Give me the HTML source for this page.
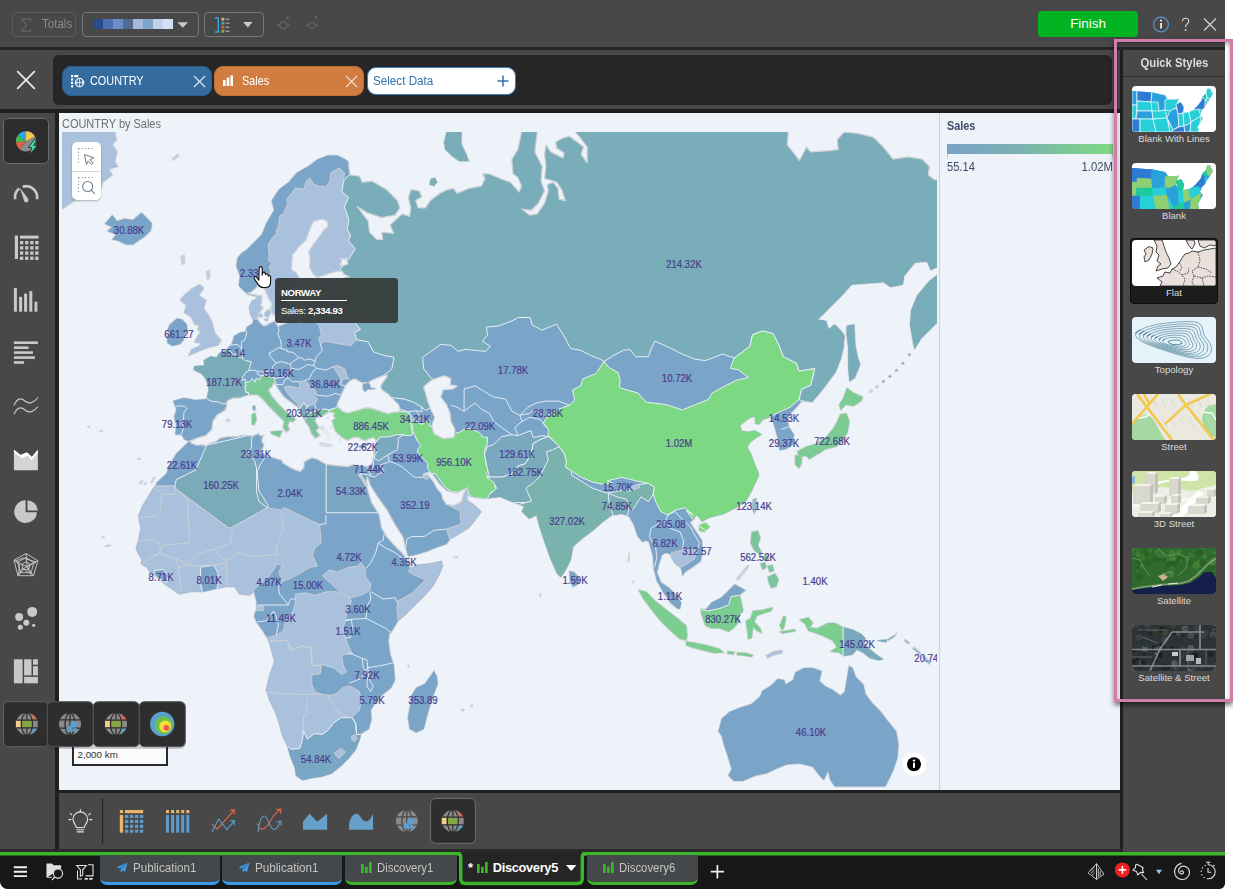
<!DOCTYPE html>
<html lang="en"><head><meta charset="utf-8"><title>Discovery5</title>
<style>
*{box-sizing:border-box;margin:0;padding:0}
html,body{width:1233px;height:889px;overflow:hidden;background:#fff;font-family:"Liberation Sans",sans-serif;}
#app{position:absolute;left:0;top:0;width:1225px;height:889px;background:#484848;overflow:hidden;border-radius:0 0 6px 8px;}
.abs{position:absolute}
/* top bar */
#topbar{position:absolute;left:0;top:0;width:1225px;height:47px;background:#484848;}
#topline{position:absolute;left:0;top:47px;width:1225px;height:3px;background:#262626;}
.tbtn{position:absolute;top:11.5px;height:25px;border:1px solid #777;border-radius:4px;}
#totals{left:12px;width:64px;border-color:#5c5c5c;color:#8a8a8a;font-size:12.7px;}
#totals span{position:absolute;left:28.5px;top:4.5px;}
#finish{position:absolute;left:1038px;top:11px;width:100px;height:26px;background:#02b322;border-radius:4px;color:#fff;font-size:13.4px;text-align:center;line-height:26px;}
/* data bar */
#databox{position:absolute;left:52.5px;top:55px;width:1059px;height:49.5px;background:#262626;border-radius:6px;}
.chip{position:absolute;top:66px;height:29.5px;border-radius:9px;color:#fff;font-size:13.2px;line-height:28.5px;}
#chip1{left:62px;width:150px;background:#356b9d;border:1px solid #2d5f8e;}
#chip2{left:214px;width:150px;background:#d17d41;border:1px solid #c06f35;}
#chip3{left:366.5px;width:149px;background:#fff;border:1.5px solid #3d7fbf;color:#3472ad;top:66.5px;height:28.5px;line-height:26px;}
#dline{position:absolute;left:0;top:108.5px;width:1225px;height:4.5px;background:#1f1f1f;}
/* sidebar */
#sideline{position:absolute;left:55px;top:110px;width:4px;height:742px;background:#1f1f1f;}
#selbtn{position:absolute;left:3px;top:118px;width:46px;height:46px;background:#2d2d2d;border:1px solid #6a6a6a;border-radius:5px;}
/* canvas */
#canvas{position:absolute;left:59px;top:113px;width:1061px;height:677px;background:#eef2f9;overflow:hidden;}
#title{position:absolute;left:3px;top:4px;font-size:12.2px;color:#6e6e6e;}
#legsep{position:absolute;left:880px;top:0;width:1px;height:677px;background:#c3d2e4;}
#legend{position:absolute;left:881px;top:0;width:180px;height:677px;}
#rline{position:absolute;left:1120px;top:50px;width:3px;height:802px;background:#1f1f1f;}
/* bottom toolbar */
#bline{position:absolute;left:55px;top:790px;width:1068px;height:3px;background:#1f1f1f;}
#btool{position:absolute;left:59px;top:793px;width:1061px;height:56px;background:#484848;}
#bline2{position:absolute;left:0;top:848.5px;width:1225px;height:3.5px;background:#2a2a2a;}
#tabbar{position:absolute;left:0;top:851.5px;width:1225px;height:38px;background:#171717;}
.tab{position:absolute;top:3.5px;height:29.5px;background:#45484b;border-radius:0 0 7px 7px;color:#c4c4c4;font-size:12.7px;line-height:26px;}
.tab.pub{border-bottom:3px solid #3b9bea;}
.tab.dis{border-bottom:3px solid #3bb52a;}
/* right panel */
#rpanel{position:absolute;left:1123px;top:50px;width:102px;height:802px;background:#484848;}
#qs{position:absolute;left:0;top:5px;width:102px;text-align:center;font-weight:bold;font-size:12.8px;color:#dcdcdc;}
#qsline{position:absolute;left:0;top:26px;width:102px;height:1px;background:#2e2e2e;}
.th{position:absolute;left:9px;width:84px;height:46px;border-radius:4px;overflow:hidden;background:#fff;}
.tl{position:absolute;left:0;width:102px;text-align:center;font-size:9.6px;color:#dcdcdc;}
#flatsel{position:absolute;left:7px;top:188px;width:88px;height:66px;background:#1c1c1c;border:1px solid #0c0c0c;border-radius:4px;}
#pink{position:absolute;left:1113.9px;top:39.4px;width:119.4px;height:662.8px;border:3.6px solid #d07fab;box-shadow:0 3px 5px rgba(0,0,0,.55), inset 0 2px 4px rgba(0,0,0,.35);}

.sx{display:inline-block;transform-origin:0 50%;white-space:nowrap}

</style></head>
<body>
<div id="app">
<div id="topbar">
  <div class="tbtn" id="totals"><svg class="abs" style="left:7px;top:5px" width="12" height="14" viewBox="0 0 12 14"><path d="M10.5 3V1H1.5L6.5 7L1.5 13H10.5V11" fill="none" stroke="#6a6a6a" stroke-width="1.1"/></svg><span class="sx" style="transform:scaleX(.91)">Totals</span></div>
  <div class="tbtn" style="left:82px;width:117px">
    <svg class="abs" style="left:10px;top:6.5px" width="100" height="11" viewBox="0 0 100 11"><rect x="0" width="10" height="10" fill="#2a4b87"/><rect x="10" width="10" height="10" fill="#4a72ae"/><rect x="20" width="10" height="10" fill="#6b8cc7"/><rect x="30" width="10" height="10" fill="#4f6b93"/><rect x="40" width="10" height="10" fill="#a3b8da"/><rect x="50" width="10" height="10" fill="#7ea5cd"/><rect x="60" width="10" height="10" fill="#c1d1e9"/><rect x="70" width="10" height="10" fill="#d5e1f3"/><path d="M84.5 3.2h10.5l-5.25 5.6z" fill="#c9c9c9"/></svg>
  </div>
  <div class="tbtn" style="left:204px;width:60px">
    <svg class="abs" style="left:5px;top:4px" width="50" height="16" viewBox="0 0 50 16"><path d="M5 1h3.3v14H5" fill="none" stroke="#2fa8e0" stroke-width="1.4"/><rect x="11.5" y="0.8" width="2.8" height="2.8" fill="#e9b45e"/><rect x="11.5" y="4.8" width="2.8" height="2.8" fill="#35b8a6"/><rect x="11.5" y="8.8" width="2.8" height="2.8" fill="#e05a3c"/><rect x="11.5" y="12.8" width="2.8" height="2.8" fill="#8db33f"/><path d="M15.6 2.2h3.8M15.6 6.2h3.8M15.6 10.2h3.8M15.6 14.2h3.8" stroke="#bdbdbd" stroke-width="1"/><path d="M33 5h9.6l-4.8 5.4z" fill="#c9c9c9"/></svg>
  </div>
  <svg class="abs" style="left:272px;top:12px" width="52" height="24" viewBox="0 0 52 24"><g fill="none" stroke="#6e6e6e" stroke-width="1"><circle cx="11.3" cy="13.3" r="3.6"/><path d="M4.5 13.3h3.2M15 13.3h3.4"/><circle cx="39.8" cy="13.3" r="3.2"/><path d="M33.5 13.3h3.1M43 13.3h3.3"/></g><path d="M14.3 6.8l1.5-2.4 1.5 2.4z" fill="#4d7fae"/><path d="M42.6 4.6h3l-1.5 2.3z" fill="#4d7fae"/></svg>
  <div id="finish">Finish</div>
  <svg class="abs" style="left:1150px;top:13px" width="72" height="24" viewBox="0 0 72 24"><circle cx="11" cy="11.5" r="7.4" fill="none" stroke="#5a9bd1" stroke-width="1.1"/><rect x="10.2" y="10" width="1.7" height="5.6" fill="#f2f2f2"/><circle cx="11.05" cy="7.6" r="1.05" fill="#f2f2f2"/><path d="M32.4 8.6c0-2.2 1.4-3.4 3.2-3.4s3.1 1.2 3.1 3c0 2.6-3.2 3-3.2 6" fill="none" stroke="#d4d4d4" stroke-width="1.1"/><circle cx="35.5" cy="17" r=".95" fill="#d4d4d4"/><path d="M54 5.5l12 12M66 5.5l-12 12" stroke="#d4d4d4" stroke-width="1.1"/></svg>
</div>
<div id="topline"></div>
<!-- data bar -->
<svg class="abs" style="left:15px;top:69px" width="22" height="22" viewBox="0 0 22 22"><path d="M2.2 2.2l17.6 17.6M19.8 2.2L2.2 19.8" stroke="#ececec" stroke-width="1.7"/></svg>
<div id="databox"></div>
<div class="chip" id="chip1"><svg class="abs" style="left:8px;top:8px" width="14" height="13" viewBox="0 0 14 13"><g fill="#fff"><rect x="0" y="0" width="2.2" height="2.2"/><rect x="3.2" y="0" width="4" height="2.2"/><rect x="0" y="3.4" width="2.2" height="2.2"/><rect x="0" y="6.8" width="2.2" height="2.2"/><rect x="0" y="10.2" width="2.2" height="2.2"/></g><circle cx="8.6" cy="7.6" r="4.3" fill="none" stroke="#fff" stroke-width="1"/><path d="M4.3 7.6h8.6M8.6 3.3v8.6M6.4 3.9c-1 2.4-1 5 0 7.4M10.8 3.9c1 2.4 1 5 0 7.4" fill="none" stroke="#fff" stroke-width=".8"/></svg><span class="abs sx" style="left:26.5px;top:0;transform:scaleX(.825)">COUNTRY</span><svg class="abs" style="left:130px;top:8px" width="13" height="13" viewBox="0 0 13 13"><path d="M1 1l11 11M12 1L1 12" stroke="#dfe8f0" stroke-width="1.1"/></svg></div>
<div class="chip" id="chip2"><svg class="abs" style="left:8px;top:8px" width="11" height="12" viewBox="0 0 11 12"><rect x="0" y="5" width="2.6" height="6" fill="#fff"/><rect x="3.7" y="2.6" width="2.6" height="8.4" fill="#fff"/><rect x="7.4" y="0.4" width="2.6" height="10.6" fill="#fff"/></svg><span class="abs sx" style="left:26.500px;top:0;transform:scaleX(.82)">Sales</span><svg class="abs" style="left:130px;top:8px" width="13" height="13" viewBox="0 0 13 13"><path d="M1 1l11 11M12 1L1 12" stroke="#f4dfd0" stroke-width="1.1"/></svg></div>
<div class="chip" id="chip3"><span class="abs sx" style="left:5.500px;top:0;transform:scaleX(.885)">Select Data</span><svg class="abs" style="left:129px;top:7px" width="12" height="12" viewBox="0 0 12 12"><path d="M6 0.5v11M0.5 6h11" stroke="#3472ad" stroke-width="1.5"/></svg></div>
<div id="dline"></div>
<!-- sidebar -->
<div id="selbtn"></div>
<svg class="abs" style="left:0;top:113px" width="55" height="640" viewBox="0 113 55 640">
<!-- pie + lightning -->
<g>
<path d="M26 141.4L26 131.2A10.2 10.2 0 0 1 35 136.600z" fill="#f3c74f"/>
<path d="M26 141.4L18 135A10.2 10.2 0 0 1 26 131.2z" fill="#2ea6ea"/>
<path d="M26 141.4L15.900 142.600A10.2 10.2 0 0 1 18 135z" fill="#45b559"/>
<path d="M26 141.4L19.500 149.300A10.2 10.2 0 0 1 15.900 142.600z" fill="#e5603e"/>
<path d="M26 141.4L35 136.600A10.2 10.2 0 0 1 26.500 151.600A10.2 10.2 0 0 1 19.500 149.300z" fill="#8b8b8b"/>
<path d="M34.200 139.600l-6.000 8.000h3.600l-2.300 7.200 8.000-9.300h-3.900l3.300-5.900z" fill="#3fe3a0" stroke="#2d2d2d" stroke-width=".9"/>
</g>
<!-- gauge -->
<g fill="none" stroke="#c9c9c9" stroke-width="2.700">
<path d="M15.17 199.23 A11.10 11.10 0 0 1 19.27 188.55"/>
<path d="M22.67 186.74 A11.10 11.10 0 0 1 37.03 199.23"/>
</g>
<path d="M19.700 187.600l8.700 11.500a2.400 2.400 0 0 1-4 2.500z" fill="#c9c9c9"/>
<!-- grid -->
<g fill="#c9c9c9">
<rect x="14.800" y="235.600" width="3.200" height="23.400"/><rect x="20" y="235.600" width="18.500" height="3"/>
<g id="gr"><rect x="20" y="241" width="3.300" height="3.300"/><rect x="25.100" y="241" width="3.300" height="3.300"/><rect x="30.200" y="241" width="3.300" height="3.300"/><rect x="35.200" y="241" width="3.300" height="3.300"/></g>
<use href="#gr" y="5.200"/><use href="#gr" y="10.400"/><use href="#gr" y="15.600"/>
</g>
<!-- column chart -->
<g fill="#c9c9c9"><rect x="13.900" y="287.900" width="3" height="23.800"/><rect x="19.100" y="296.800" width="3" height="14.900"/><rect x="24.100" y="293.600" width="3" height="18.100"/><rect x="29.300" y="291.100" width="3" height="20.600"/><rect x="34.500" y="301.700" width="2.900" height="10"/></g>
<!-- h bars -->
<g fill="#c9c9c9"><rect x="13.900" y="341.400" width="24" height="2.600"/><rect x="13.900" y="346.400" width="14.600" height="2.600"/><rect x="13.900" y="351.300" width="19.100" height="2.600"/><rect x="13.900" y="356.300" width="21" height="2.600"/><rect x="13.900" y="361.200" width="10.200" height="2.600"/></g>
<!-- lines -->
<g fill="none" stroke="#c9c9c9" stroke-width="1.100"><path d="M14 405.500c3-7.500 7-8 11-4.500s9 2 13-3.500"/><path d="M14 414.500c3-7.500 7-8 11-4.500s9 2 13-3.500"/></g>
<!-- area -->
<path d="M13.900 449.800l6.700 5.200 6-2.500 1.700 1 3.500 3.500 6.100-7.200v20.500h-24z" fill="#d4d4d4"/>
<path d="M13.900 449.800l6.700 5.200 6-2.500 1.700 1 3.500 3.500 6.100-7.200v2.800l-6 7.400-4.200-4.300-5.600 2.600-8.200-6z" fill="#fff"/>
<!-- pie -->
<path d="M25.600 512.300V500.300A11.400 11.400 0 1 0 37 512.300z" fill="#c9c9c9"/><path d="M27.500 510.400V500.200A10.800 10.800 0 0 1 37.700 510.400z" fill="#c9c9c9"/>
<!-- radar -->
<g fill="none" stroke="#c9c9c9" stroke-width=".9"><path d="M26 553.500l11.800 7.200-4.300 15h-15.600l-3.900-15.600z"/><path d="M26 557.600l8 5-3 10h-10.600l-2.700-10.500z"/><path d="M26 561.800l4.200 2.700-1.600 5.200h-5.400l-1.400-5.400z"/><path d="M26 553.500l1 13M37.800 560.700l-11.800 5.800M33.500 575.700l-7.500-9.200M17.900 575.700l8.100-9.200M14 560.100l12 6.400"/></g>
<path d="M23 558l13 4-8.500 4.500 4 8-9-6.500-4 7 1-10.500-4-3.500z" fill="none" stroke="#c9c9c9" stroke-width=".9"/>
<!-- bubbles -->
<g fill="#c9c9c9"><circle cx="32.200" cy="611.900" r="5"/><circle cx="19.100" cy="616.900" r="4"/><circle cx="26.300" cy="622.800" r="3"/><circle cx="20.300" cy="627.300" r="2.500"/><circle cx="33.700" cy="625.300" r="1.600"/></g>
<!-- treemap -->
<g fill="#c9c9c9"><rect x="13.900" y="659.300" width="8.700" height="24"/><rect x="24.100" y="659.300" width="7.400" height="16.100"/><rect x="33" y="659.300" width="4.900" height="5.400"/><rect x="33" y="666.200" width="4.900" height="9.200"/><rect x="24.100" y="676.900" width="13.800" height="6.400"/></g>
</svg>

<div id="sideline"></div>
<div id="canvas">
  <div id="title" class="sx" style="transform:scaleX(.9)">COUNTRY by Sales</div>
  <svg class="abs" style="left:3px;top:19px" width="875" height="657" viewBox="62 132 875 657" shape-rendering="geometricPrecision">
<defs><clipPath id="landclip">
<path d="M61.9,131.9 114.7,131.9 116.4,139.7 112.3,144.6 117.2,151.9 114.7,161.6 117.9,166.5 108.7,168.9 112.3,175.0 102.6,182.3 100.1,190.8 91.6,193.3 74.6,200.6 61.9,209.1Z"/>
<path d="M105.0,223.7 112.3,215.2 117.2,221.2 124.5,218.8 133.0,220.0 141.5,212.7 147.6,218.8 152.0,223.7 150.5,231.0 143.9,237.1 133.0,244.4 125.7,244.4 118.4,240.7 112.3,239.5 116.0,234.6 107.4,231.0 112.3,227.3Z"/>
<path d="M169.5,325.0 174.0,321.0 177.0,318.5 182.0,319.5 186.5,324.0 187.5,330.0 184.0,335.0 183.5,340.0 180.0,344.0 172.5,346.0 167.5,343.0 167.0,337.0 170.0,333.0 167.5,330.0Z"/>
<path d="M199.9,284.5 203.6,288.2 198.7,295.4 206.0,300.3 203.6,308.8 208.4,314.9 212.0,322.2 214.9,333.2 221.0,340.3 217.9,345.3 208.8,347.4 201.7,350.0 193.6,353.5 188.5,355.5 191.6,349.4 198.7,346.4 201.7,343.3 194.6,342.3 197.6,336.2 200.7,332.2 197.6,329.1 199.7,325.1 195.0,324.6 191.4,317.3 184.1,312.5 186.5,305.2 180.4,300.3 184.1,295.4 192.6,288.2Z"/>
<path d="M180.9,256.5 184.1,255.3 184.6,262.6 182.1,264.3Z"/>
<path d="M206.7,271.6 209.6,270.6 209.4,278.4 207.0,278.9Z"/>
<path d="M172.4,158.7 178.0,154.3 178.7,155.8 173.4,160.2Z"/>
<path d="M247.3,294.2 241.3,288.2 238.8,285.7 240.0,276.0 236.4,266.3 237.6,257.7 241.3,253.6 247.3,249.2 254.6,241.9 261.9,234.6 266.8,222.5 274.1,210.3 271.7,200.6 279.0,189.6 288.7,182.3 297.2,172.6 308.2,166.5 317.9,159.2 327.6,155.5 337.4,155.5 344.7,159.2 352.0,164.1 360.0,166.5 350.0,172.0 350.0,120.0 950.0,120.0 941.7,266.3 936.1,267.5 930.8,269.9 927.1,261.4 914.9,262.6 904.0,276.0 902.8,284.5 890.6,286.9 883.3,282.1 868.7,283.3 851.7,284.5 841.9,295.5 827.3,310.0 817.6,319.8 826.1,321.0 828.6,329.5 834.6,324.6 841.9,331.9 844.5,336.0 843.2,348.9 840.6,359.3 835.4,372.3 827.6,382.7 819.8,393.1 812.1,402.1 801.7,400.8 796.5,407.3 791.3,412.5 787.4,419.0 788.7,426.8 793.9,434.6 792.6,445.0 786.1,448.9 779.6,450.2 778.3,439.8 775.7,430.7 773.1,421.6 770.0,416.9 762.7,419.5 758.9,424.2 755.5,423.7 755.0,416.4 749.8,417.7 744.6,421.6 739.9,425.5 741.5,430.7 747.2,432.0 755.0,430.7 761.4,434.6 755.0,438.5 749.8,442.4 747.2,447.6 751.1,454.0 753.7,461.8 756.3,468.3 758.9,474.8 755.5,482.6 751.1,491.7 745.9,500.8 736.8,507.2 723.8,513.7 709.5,517.6 701.8,521.5 697.9,515.6 691.4,517.6 686.2,510.4 693.4,515.0 694.6,518.7 689.8,522.3 694.6,529.6 701.9,540.6 702.4,552.7 700.7,561.2 692.2,567.3 684.9,572.2 682.5,575.8 681.3,568.5 678.8,566.1 675.2,563.7 671.5,557.6 670.3,553.9 665.5,552.7 661.8,555.2 659.4,562.5 656.9,572.2 660.6,581.9 667.9,586.8 675.2,594.1 681.3,602.6 680.0,608.7 677.6,608.7 670.3,602.6 663.0,591.7 656.9,580.7 653.8,568.5 652.8,555.2 648.9,541.8 646.0,540.6 642.3,541.8 637.5,535.7 633.8,524.7 629.0,516.2 621.7,513.8 614.4,515.0 611.9,515.0 602.2,522.3 592.5,530.8 582.7,538.1 573.0,546.6 570.6,560.0 565.7,569.8 560.8,577.1 557.2,573.4 551.1,560.0 545.0,543.0 540.1,528.4 536.5,515.0 529.2,518.7 521.9,511.4 524.3,506.5 514.6,502.8 500.0,496.8 498.4,496.9 488.5,498.2 478.6,498.2 468.7,495.7 467.4,488.3 466.2,489.5 467.4,500.6 474.9,505.6 481.1,511.8 474.9,520.4 468.7,527.8 458.8,534.0 450.1,539.0 446.4,543.9 436.5,547.6 426.6,551.4 414.2,555.1 408.1,556.3 410.5,568.7 416.7,565.0 429.1,563.7 441.5,561.3 442.7,566.2 439.0,574.9 432.8,586.0 425.4,594.7 414.2,605.8 404.3,615.7 398.2,620.6 390.7,633.0 392.0,630.0 389.2,633.7 388.3,641.2 390.2,654.2 393.9,665.4 394.8,680.4 391.1,687.8 381.8,695.3 374.3,704.6 370.6,710.2 371.5,719.5 368.7,728.9 361.2,733.5 359.4,740.1 355.7,749.4 348.2,758.7 340.7,766.2 331.4,773.6 322.1,776.4 310.9,778.3 302.5,780.2 296.0,775.5 295.0,768.0 290.4,756.8 287.6,746.6 282.0,734.5 279.2,723.3 275.4,712.1 269.8,700.9 266.1,689.7 269.8,674.8 274.5,661.7 271.7,650.5 268.0,639.3 262.4,630.0 262.6,630.6 256.5,622.1 254.1,616.0 256.5,608.7 256.5,601.4 254.1,591.7 249.2,595.3 239.5,594.1 234.6,586.8 226.1,586.8 213.9,589.2 203.0,591.7 190.8,591.7 178.7,594.1 172.6,589.2 165.3,584.4 156.8,577.1 150.7,573.4 147.0,567.3 140.9,563.7 142.2,560.0 138.5,553.9 136.1,547.9 138.5,540.6 140.9,528.4 138.5,516.2 142.2,506.5 148.2,496.8 154.3,487.0 155.5,485.8 155.5,485.9 157.1,482.2 166.2,474.1 171.3,461.9 176.4,453.8 182.4,447.7 187.5,442.7 189.5,441.2 184.5,439.6 181.4,434.6 175.3,434.6 176.4,425.4 174.3,417.3 176.4,409.2 173.3,401.1 183.5,398.1 195.6,400.1 206.8,399.1 208.8,388.9 205.8,378.8 201.7,373.7 193.6,369.7 194.6,366.2 204.7,365.6 203.7,360.6 210.8,356.5 216.9,357.5 218.9,353.5 226.0,350.4 232.1,343.3 234.1,336.2 240.2,332.6 245.3,331.8 246.9,327.1 252.4,323.6 253.4,320.0 253.4,319.9 250.1,313.4 249.3,306.9 251.8,301.2 257.4,298.0 260.4,297.5Z"/>
<path d="M941.7,272.3 936.1,276.0 929.5,280.9 917.4,295.5 911.3,310.0 910.1,324.6 913.7,346.1 912.0,336.0 914.6,348.9 921.1,338.5 928.9,330.8 941.8,317.8Z"/>
<path d="M846.8,325.9 854.1,324.6 855.3,346.1 852.3,332.1 854.9,343.7 857.5,356.7 860.1,364.5 854.9,377.5 849.7,381.4 848.4,369.7 848.4,348.9 846.6,333.4Z"/>
<path d="M847.1,387.9 853.6,393.1 862.7,396.9 861.4,400.8 853.6,406.0 845.8,404.7 840.6,409.9 839.3,404.7 843.2,398.2Z"/>
<path d="M840.1,414.6 846.3,413.3 849.4,421.6 847.4,432.5 842.2,441.1 836.5,446.5 825.6,449.1 817.8,454.3 807.4,455.6 799.1,456.9 797.3,451.4 806.3,446.8 816.2,443.7 826.1,437.2 833.3,428.6 837.5,421.1Z"/>
<path d="M805.6,455.3 814.7,451.4 817.2,454.0 809.5,459.2Z"/>
<path d="M795.2,455.3 801.7,456.6 801.7,463.1 799.1,468.3 795.2,464.4Z"/>
<path d="M752.9,499.5 756.3,498.2 757.0,507.2 754.4,513.7 751.8,507.2Z"/>
<path d="M699.2,525.4 705.6,522.8 709.5,526.7 704.3,531.9 699.2,530.6Z"/>
<path d="M569.3,571.0 574.2,572.2 579.1,578.3 577.9,584.4 573.0,586.8 570.1,580.7Z"/>
<path d="M751.8,532.0 757.9,530.8 760.3,538.1 757.9,545.4 761.6,552.7 759.1,553.9 754.3,550.3 750.6,543.0Z"/>
<path d="M767.6,577.1 774.9,573.4 778.6,579.5 776.2,586.8 771.3,588.0 768.9,583.1Z"/>
<path d="M760.3,563.7 765.2,562.5 766.4,567.3 762.8,569.8Z"/>
<path d="M767.6,566.1 772.5,564.9 773.7,571.0 769.6,572.2Z"/>
<path d="M763.3,556.4 767.6,555.2 768.9,560.0 765.2,560.5Z"/>
<path d="M736.5,579.0 747.7,565.4 748.7,566.6 738.0,580.0Z"/>
<path d="M638.7,590.0 646.0,591.7 655.7,601.4 667.9,611.1 677.6,618.4 686.1,625.7 687.3,635.5 686.1,640.3 680.0,639.1 670.3,630.6 660.6,620.9 650.9,608.7 643.6,599.0Z"/>
<path d="M686.1,641.5 694.6,642.7 706.8,645.2 719.0,648.8 723.8,652.5 714.1,653.0 701.9,650.0 692.2,647.6 686.1,645.2Z"/>
<path d="M700.7,608.7 705.6,609.9 711.7,602.6 721.4,597.7 727.5,591.7 734.8,584.4 743.3,589.2 745.7,590.4 739.7,595.3 742.1,605.0 743.3,611.1 738.4,616.0 739.7,620.9 733.6,628.2 728.7,631.8 719.0,628.2 711.7,628.2 705.6,625.7 701.9,616.0Z"/>
<path d="M745.7,620.9 750.6,618.4 753.0,611.1 762.8,609.9 772.5,607.5 771.3,611.1 762.8,613.6 756.7,616.0 754.3,622.1 760.3,628.2 761.6,633.0 756.7,630.6 753.0,626.9 751.8,637.9 748.2,639.1 747.0,628.2Z"/>
<path d="M727.5,651.3 734.8,652.0 733.6,654.4 727.5,653.7Z"/>
<path d="M737.2,652.5 745.7,653.0 753.0,654.9 751.8,656.9 743.3,655.4 737.2,654.9Z"/>
<path d="M766.4,655.4 774.9,651.3 782.2,650.5 781.8,653.0 773.7,654.9 767.6,657.8Z"/>
<path d="M779.8,625.7 783.5,616.0 785.9,617.2 784.7,625.7 782.2,630.6Z"/>
<path d="M779.8,631.8 794.4,629.4 795.6,631.1 782.2,633.5Z"/>
<path d="M799.7,619.7 808.5,617.6 812.9,623.0 809.6,627.4 817.2,628.5 828.2,623.0 834.8,623.0 843.6,627.4 852.4,629.6 861.1,634.0 865.5,638.4 863.3,642.8 869.9,649.4 876.5,654.8 883.1,659.2 878.7,660.3 869.9,658.1 863.3,652.7 856.7,649.4 852.4,654.8 843.6,655.9 839.2,652.7 830.4,651.6 837.0,647.2 832.6,640.6 823.8,636.2 815.1,632.9 808.5,630.7 805.2,624.1Z"/>
<path d="M877.6,640.6 887.5,639.5 895.1,635.1 896.7,632.9 894.0,636.9 885.3,642.1Z"/>
<path d="M905.0,639.5 909.4,642.8 908.3,643.9 904.6,640.8Z"/>
<path d="M913.8,647.2 920.4,652.7 919.3,654.0 912.9,648.7Z"/>
<path d="M923.7,655.9 930.2,662.5 929.1,664.1 922.6,657.5Z"/>
<path d="M721.8,718.5 729.5,711.9 740.5,707.5 751.4,704.2 760.2,696.5 762.4,691.0 771.2,685.6 777.8,679.0 784.3,680.1 785.4,684.5 793.1,680.1 795.3,672.4 804.1,668.0 812.9,668.0 821.6,671.3 819.4,681.2 826.0,686.7 832.6,690.0 840.3,695.4 844.7,692.1 846.9,679.0 849.1,665.8 852.4,668.0 855.6,676.8 863.3,684.5 865.5,694.3 872.1,703.1 880.9,711.9 887.5,720.7 896.2,731.6 898.4,744.8 897.3,758.0 892.9,771.1 887.5,782.1 885.3,786.5 834.8,786.5 830.4,779.9 828.2,771.1 823.8,779.9 819.4,775.5 812.9,766.7 799.7,763.4 786.5,764.5 775.6,768.9 766.8,773.3 755.8,775.5 742.7,781.0 733.9,781.0 728.4,775.5 731.7,768.9 728.4,758.0 724.0,744.8 721.8,736.0 718.5,731.6Z"/>
<path d="M434.0,671.0 436.8,676.6 437.7,684.1 434.0,693.4 430.3,704.6 426.5,717.7 423.7,728.9 416.3,732.6 409.7,728.9 407.9,717.7 409.7,708.3 411.6,695.3 416.3,687.8 424.7,684.1 430.3,676.6Z"/>
<path d="M908.1,354.6 909.9,353.6 910.7,354.9 908.9,355.9Z"/>
<path d="M901.6,363.2 903.4,362.2 904.2,363.5 902.4,364.5Z"/>
<path d="M895.1,370.2 896.9,369.2 897.7,370.5 895.9,371.5Z"/>
<path d="M888.6,376.2 890.4,375.1 891.2,376.4 889.4,377.5Z"/>
<path d="M882.1,381.4 884.0,380.3 884.7,381.6 882.9,382.7Z"/>
<path d="M875.6,386.6 877.5,385.5 878.2,386.8 876.4,387.9Z"/>
<path d="M869.7,391.0 871.5,389.9 872.3,391.2 870.5,392.3Z"/>
<path d="M139.3,482.6 142.4,480.6 141.6,483.1Z"/>
<path d="M144.2,484.1 146.0,482.6 146.0,484.1Z"/>
<path d="M150.9,482.6 152.7,479.5 152.7,482.1Z"/>
<path d="M153.2,478.5 154.5,477.0 154.5,478.5Z"/>
<path d="M137.5,459.0 140.2,458.2 139.8,459.3Z"/>
<path d="M105.4,546.2 109.9,544.8 109.9,546.2Z"/>
<path d="M101.9,536.9 104.1,536.0 103.6,537.4Z"/>
<path d="M99.6,431.4 102.3,430.2 101.9,431.4Z"/>
<path d="M87.6,426.8 89.8,426.2 89.4,427.4Z"/>
<path d="M461.3,710.2 463.6,709.2 463.1,711.1Z"/>
<path d="M470.7,705.9 472.5,704.9 472.0,706.8Z"/>
<path d="M407.8,666.3 408.7,665.4 408.5,667.0Z"/>
<path d="M453.8,557.3 457.8,556.8 456.4,557.7Z"/>
<path d="M539.8,595.7 540.7,593.9 540.3,596.6Z"/>
<path d="M628.1,561.4 629.5,553.6 629.0,560.9Z"/>
<path d="M632.6,582.2 633.5,580.9 633.3,582.7Z"/>
</clipPath></defs>
<g fill="none" stroke="#cfd2d6" stroke-width="1.6" stroke-linejoin="round">
<path d="M61.9,131.9 114.7,131.9 116.4,139.7 112.3,144.6 117.2,151.9 114.7,161.6 117.9,166.5 108.7,168.9 112.3,175.0 102.6,182.3 100.1,190.8 91.6,193.3 74.6,200.6 61.9,209.1Z"/>
<path d="M105.0,223.7 112.3,215.2 117.2,221.2 124.5,218.8 133.0,220.0 141.5,212.7 147.6,218.8 152.0,223.7 150.5,231.0 143.9,237.1 133.0,244.4 125.7,244.4 118.4,240.7 112.3,239.5 116.0,234.6 107.4,231.0 112.3,227.3Z"/>
<path d="M169.5,325.0 174.0,321.0 177.0,318.5 182.0,319.5 186.5,324.0 187.5,330.0 184.0,335.0 183.5,340.0 180.0,344.0 172.5,346.0 167.5,343.0 167.0,337.0 170.0,333.0 167.5,330.0Z"/>
<path d="M199.9,284.5 203.6,288.2 198.7,295.4 206.0,300.3 203.6,308.8 208.4,314.9 212.0,322.2 214.9,333.2 221.0,340.3 217.9,345.3 208.8,347.4 201.7,350.0 193.6,353.5 188.5,355.5 191.6,349.4 198.7,346.4 201.7,343.3 194.6,342.3 197.6,336.2 200.7,332.2 197.6,329.1 199.7,325.1 195.0,324.6 191.4,317.3 184.1,312.5 186.5,305.2 180.4,300.3 184.1,295.4 192.6,288.2Z"/>
<path d="M180.9,256.5 184.1,255.3 184.6,262.6 182.1,264.3Z"/>
<path d="M206.7,271.6 209.6,270.6 209.4,278.4 207.0,278.9Z"/>
<path d="M172.4,158.7 178.0,154.3 178.7,155.8 173.4,160.2Z"/>
<path d="M247.3,294.2 241.3,288.2 238.8,285.7 240.0,276.0 236.4,266.3 237.6,257.7 241.3,253.6 247.3,249.2 254.6,241.9 261.9,234.6 266.8,222.5 274.1,210.3 271.7,200.6 279.0,189.6 288.7,182.3 297.2,172.6 308.2,166.5 317.9,159.2 327.6,155.5 337.4,155.5 344.7,159.2 352.0,164.1 360.0,166.5 350.0,172.0 350.0,120.0 950.0,120.0 941.7,266.3 936.1,267.5 930.8,269.9 927.1,261.4 914.9,262.6 904.0,276.0 902.8,284.5 890.6,286.9 883.3,282.1 868.7,283.3 851.7,284.5 841.9,295.5 827.3,310.0 817.6,319.8 826.1,321.0 828.6,329.5 834.6,324.6 841.9,331.9 844.5,336.0 843.2,348.9 840.6,359.3 835.4,372.3 827.6,382.7 819.8,393.1 812.1,402.1 801.7,400.8 796.5,407.3 791.3,412.5 787.4,419.0 788.7,426.8 793.9,434.6 792.6,445.0 786.1,448.9 779.6,450.2 778.3,439.8 775.7,430.7 773.1,421.6 770.0,416.9 762.7,419.5 758.9,424.2 755.5,423.7 755.0,416.4 749.8,417.7 744.6,421.6 739.9,425.5 741.5,430.7 747.2,432.0 755.0,430.7 761.4,434.6 755.0,438.5 749.8,442.4 747.2,447.6 751.1,454.0 753.7,461.8 756.3,468.3 758.9,474.8 755.5,482.6 751.1,491.7 745.9,500.8 736.8,507.2 723.8,513.7 709.5,517.6 701.8,521.5 697.9,515.6 691.4,517.6 686.2,510.4 693.4,515.0 694.6,518.7 689.8,522.3 694.6,529.6 701.9,540.6 702.4,552.7 700.7,561.2 692.2,567.3 684.9,572.2 682.5,575.8 681.3,568.5 678.8,566.1 675.2,563.7 671.5,557.6 670.3,553.9 665.5,552.7 661.8,555.2 659.4,562.5 656.9,572.2 660.6,581.9 667.9,586.8 675.2,594.1 681.3,602.6 680.0,608.7 677.6,608.7 670.3,602.6 663.0,591.7 656.9,580.7 653.8,568.5 652.8,555.2 648.9,541.8 646.0,540.6 642.3,541.8 637.5,535.7 633.8,524.7 629.0,516.2 621.7,513.8 614.4,515.0 611.9,515.0 602.2,522.3 592.5,530.8 582.7,538.1 573.0,546.6 570.6,560.0 565.7,569.8 560.8,577.1 557.2,573.4 551.1,560.0 545.0,543.0 540.1,528.4 536.5,515.0 529.2,518.7 521.9,511.4 524.3,506.5 514.6,502.8 500.0,496.8 498.4,496.9 488.5,498.2 478.6,498.2 468.7,495.7 467.4,488.3 466.2,489.5 467.4,500.6 474.9,505.6 481.1,511.8 474.9,520.4 468.7,527.8 458.8,534.0 450.1,539.0 446.4,543.9 436.5,547.6 426.6,551.4 414.2,555.1 408.1,556.3 410.5,568.7 416.7,565.0 429.1,563.7 441.5,561.3 442.7,566.2 439.0,574.9 432.8,586.0 425.4,594.7 414.2,605.8 404.3,615.7 398.2,620.6 390.7,633.0 392.0,630.0 389.2,633.7 388.3,641.2 390.2,654.2 393.9,665.4 394.8,680.4 391.1,687.8 381.8,695.3 374.3,704.6 370.6,710.2 371.5,719.5 368.7,728.9 361.2,733.5 359.4,740.1 355.7,749.4 348.2,758.7 340.7,766.2 331.4,773.6 322.1,776.4 310.9,778.3 302.5,780.2 296.0,775.5 295.0,768.0 290.4,756.8 287.6,746.6 282.0,734.5 279.2,723.3 275.4,712.1 269.8,700.9 266.1,689.7 269.8,674.8 274.5,661.7 271.7,650.5 268.0,639.3 262.4,630.0 262.6,630.6 256.5,622.1 254.1,616.0 256.5,608.7 256.5,601.4 254.1,591.7 249.2,595.3 239.5,594.1 234.6,586.8 226.1,586.8 213.9,589.2 203.0,591.7 190.8,591.7 178.7,594.1 172.6,589.2 165.3,584.4 156.8,577.1 150.7,573.4 147.0,567.3 140.9,563.7 142.2,560.0 138.5,553.9 136.1,547.9 138.5,540.6 140.9,528.4 138.5,516.2 142.2,506.5 148.2,496.8 154.3,487.0 155.5,485.8 155.5,485.9 157.1,482.2 166.2,474.1 171.3,461.9 176.4,453.8 182.4,447.7 187.5,442.7 189.5,441.2 184.5,439.6 181.4,434.6 175.3,434.6 176.4,425.4 174.3,417.3 176.4,409.2 173.3,401.1 183.5,398.1 195.6,400.1 206.8,399.1 208.8,388.9 205.8,378.8 201.7,373.7 193.6,369.7 194.6,366.2 204.7,365.6 203.7,360.6 210.8,356.5 216.9,357.5 218.9,353.5 226.0,350.4 232.1,343.3 234.1,336.2 240.2,332.6 245.3,331.8 246.9,327.1 252.4,323.6 253.4,320.0 253.4,319.9 250.1,313.4 249.3,306.9 251.8,301.2 257.4,298.0 260.4,297.5Z"/>
<path d="M941.7,272.3 936.1,276.0 929.5,280.9 917.4,295.5 911.3,310.0 910.1,324.6 913.7,346.1 912.0,336.0 914.6,348.9 921.1,338.5 928.9,330.8 941.8,317.8Z"/>
<path d="M846.8,325.9 854.1,324.6 855.3,346.1 852.3,332.1 854.9,343.7 857.5,356.7 860.1,364.5 854.9,377.5 849.7,381.4 848.4,369.7 848.4,348.9 846.6,333.4Z"/>
<path d="M847.1,387.9 853.6,393.1 862.7,396.9 861.4,400.8 853.6,406.0 845.8,404.7 840.6,409.9 839.3,404.7 843.2,398.2Z"/>
<path d="M840.1,414.6 846.3,413.3 849.4,421.6 847.4,432.5 842.2,441.1 836.5,446.5 825.6,449.1 817.8,454.3 807.4,455.6 799.1,456.9 797.3,451.4 806.3,446.8 816.2,443.7 826.1,437.2 833.3,428.6 837.5,421.1Z"/>
<path d="M805.6,455.3 814.7,451.4 817.2,454.0 809.5,459.2Z"/>
<path d="M795.2,455.3 801.7,456.6 801.7,463.1 799.1,468.3 795.2,464.4Z"/>
<path d="M752.9,499.5 756.3,498.2 757.0,507.2 754.4,513.7 751.8,507.2Z"/>
<path d="M699.2,525.4 705.6,522.8 709.5,526.7 704.3,531.9 699.2,530.6Z"/>
<path d="M569.3,571.0 574.2,572.2 579.1,578.3 577.9,584.4 573.0,586.8 570.1,580.7Z"/>
<path d="M751.8,532.0 757.9,530.8 760.3,538.1 757.9,545.4 761.6,552.7 759.1,553.9 754.3,550.3 750.6,543.0Z"/>
<path d="M767.6,577.1 774.9,573.4 778.6,579.5 776.2,586.8 771.3,588.0 768.9,583.1Z"/>
<path d="M760.3,563.7 765.2,562.5 766.4,567.3 762.8,569.8Z"/>
<path d="M767.6,566.1 772.5,564.9 773.7,571.0 769.6,572.2Z"/>
<path d="M763.3,556.4 767.6,555.2 768.9,560.0 765.2,560.5Z"/>
<path d="M736.5,579.0 747.7,565.4 748.7,566.6 738.0,580.0Z"/>
<path d="M638.7,590.0 646.0,591.7 655.7,601.4 667.9,611.1 677.6,618.4 686.1,625.7 687.3,635.5 686.1,640.3 680.0,639.1 670.3,630.6 660.6,620.9 650.9,608.7 643.6,599.0Z"/>
<path d="M686.1,641.5 694.6,642.7 706.8,645.2 719.0,648.8 723.8,652.5 714.1,653.0 701.9,650.0 692.2,647.6 686.1,645.2Z"/>
<path d="M700.7,608.7 705.6,609.9 711.7,602.6 721.4,597.7 727.5,591.7 734.8,584.4 743.3,589.2 745.7,590.4 739.7,595.3 742.1,605.0 743.3,611.1 738.4,616.0 739.7,620.9 733.6,628.2 728.7,631.8 719.0,628.2 711.7,628.2 705.6,625.7 701.9,616.0Z"/>
<path d="M745.7,620.9 750.6,618.4 753.0,611.1 762.8,609.9 772.5,607.5 771.3,611.1 762.8,613.6 756.7,616.0 754.3,622.1 760.3,628.2 761.6,633.0 756.7,630.6 753.0,626.9 751.8,637.9 748.2,639.1 747.0,628.2Z"/>
<path d="M727.5,651.3 734.8,652.0 733.6,654.4 727.5,653.7Z"/>
<path d="M737.2,652.5 745.7,653.0 753.0,654.9 751.8,656.9 743.3,655.4 737.2,654.9Z"/>
<path d="M766.4,655.4 774.9,651.3 782.2,650.5 781.8,653.0 773.7,654.9 767.6,657.8Z"/>
<path d="M779.8,625.7 783.5,616.0 785.9,617.2 784.7,625.7 782.2,630.6Z"/>
<path d="M779.8,631.8 794.4,629.4 795.6,631.1 782.2,633.5Z"/>
<path d="M799.7,619.7 808.5,617.6 812.9,623.0 809.6,627.4 817.2,628.5 828.2,623.0 834.8,623.0 843.6,627.4 852.4,629.6 861.1,634.0 865.5,638.4 863.3,642.8 869.9,649.4 876.5,654.8 883.1,659.2 878.7,660.3 869.9,658.1 863.3,652.7 856.7,649.4 852.4,654.8 843.6,655.9 839.2,652.7 830.4,651.6 837.0,647.2 832.6,640.6 823.8,636.2 815.1,632.9 808.5,630.7 805.2,624.1Z"/>
<path d="M877.6,640.6 887.5,639.5 895.1,635.1 896.7,632.9 894.0,636.9 885.3,642.1Z"/>
<path d="M905.0,639.5 909.4,642.8 908.3,643.9 904.6,640.8Z"/>
<path d="M913.8,647.2 920.4,652.7 919.3,654.0 912.9,648.7Z"/>
<path d="M923.7,655.9 930.2,662.5 929.1,664.1 922.6,657.5Z"/>
<path d="M721.8,718.5 729.5,711.9 740.5,707.5 751.4,704.2 760.2,696.5 762.4,691.0 771.2,685.6 777.8,679.0 784.3,680.1 785.4,684.5 793.1,680.1 795.3,672.4 804.1,668.0 812.9,668.0 821.6,671.3 819.4,681.2 826.0,686.7 832.6,690.0 840.3,695.4 844.7,692.1 846.9,679.0 849.1,665.8 852.4,668.0 855.6,676.8 863.3,684.5 865.5,694.3 872.1,703.1 880.9,711.9 887.5,720.7 896.2,731.6 898.4,744.8 897.3,758.0 892.9,771.1 887.5,782.1 885.3,786.5 834.8,786.5 830.4,779.9 828.2,771.1 823.8,779.9 819.4,775.5 812.9,766.7 799.7,763.4 786.5,764.5 775.6,768.9 766.8,773.3 755.8,775.5 742.7,781.0 733.9,781.0 728.4,775.5 731.7,768.9 728.4,758.0 724.0,744.8 721.8,736.0 718.5,731.6Z"/>
<path d="M434.0,671.0 436.8,676.6 437.7,684.1 434.0,693.4 430.3,704.6 426.5,717.7 423.7,728.9 416.3,732.6 409.7,728.9 407.9,717.7 409.7,708.3 411.6,695.3 416.3,687.8 424.7,684.1 430.3,676.6Z"/>
<path d="M908.1,354.6 909.9,353.6 910.7,354.9 908.9,355.9Z"/>
<path d="M901.6,363.2 903.4,362.2 904.2,363.5 902.4,364.5Z"/>
<path d="M895.1,370.2 896.9,369.2 897.7,370.5 895.9,371.5Z"/>
<path d="M888.6,376.2 890.4,375.1 891.2,376.4 889.4,377.5Z"/>
<path d="M882.1,381.4 884.0,380.3 884.7,381.6 882.9,382.7Z"/>
<path d="M875.6,386.6 877.5,385.5 878.2,386.8 876.4,387.9Z"/>
<path d="M869.7,391.0 871.5,389.9 872.3,391.2 870.5,392.3Z"/>
<path d="M139.3,482.6 142.4,480.6 141.6,483.1Z"/>
<path d="M144.2,484.1 146.0,482.6 146.0,484.1Z"/>
<path d="M150.9,482.6 152.7,479.5 152.7,482.1Z"/>
<path d="M153.2,478.5 154.5,477.0 154.5,478.5Z"/>
<path d="M137.5,459.0 140.2,458.2 139.8,459.3Z"/>
<path d="M105.4,546.2 109.9,544.8 109.9,546.2Z"/>
<path d="M101.9,536.9 104.1,536.0 103.6,537.4Z"/>
<path d="M99.6,431.4 102.3,430.2 101.9,431.4Z"/>
<path d="M87.6,426.8 89.8,426.2 89.4,427.4Z"/>
<path d="M461.3,710.2 463.6,709.2 463.1,711.1Z"/>
<path d="M470.7,705.9 472.5,704.9 472.0,706.8Z"/>
<path d="M407.8,666.3 408.7,665.4 408.5,667.0Z"/>
<path d="M453.8,557.3 457.8,556.8 456.4,557.7Z"/>
<path d="M539.8,595.7 540.7,593.9 540.3,596.6Z"/>
<path d="M628.1,561.4 629.5,553.6 629.0,560.9Z"/>
<path d="M632.6,582.2 633.5,580.9 633.3,582.7Z"/>
</g><g>
<path d="M61.9,131.9 114.7,131.9 116.4,139.7 112.3,144.6 117.2,151.9 114.7,161.6 117.9,166.5 108.7,168.9 112.3,175.0 102.6,182.3 100.1,190.8 91.6,193.3 74.6,200.6 61.9,209.1Z" fill="#a9c1dc"/>
<path d="M105.0,223.7 112.3,215.2 117.2,221.2 124.5,218.8 133.0,220.0 141.5,212.7 147.6,218.8 152.0,223.7 150.5,231.0 143.9,237.1 133.0,244.4 125.7,244.4 118.4,240.7 112.3,239.5 116.0,234.6 107.4,231.0 112.3,227.3Z" fill="#7ba4c9"/>
<path d="M169.5,325.0 174.0,321.0 177.0,318.5 182.0,319.5 186.5,324.0 187.5,330.0 184.0,335.0 183.5,340.0 180.0,344.0 172.5,346.0 167.5,343.0 167.0,337.0 170.0,333.0 167.5,330.0Z" fill="#7ba4c9"/>
<path d="M199.9,284.5 203.6,288.2 198.7,295.4 206.0,300.3 203.6,308.8 208.4,314.9 212.0,322.2 214.9,333.2 221.0,340.3 217.9,345.3 208.8,347.4 201.7,350.0 193.6,353.5 188.5,355.5 191.6,349.4 198.7,346.4 201.7,343.3 194.6,342.3 197.6,336.2 200.7,332.2 197.6,329.1 199.7,325.1 195.0,324.6 191.4,317.3 184.1,312.5 186.5,305.2 180.4,300.3 184.1,295.4 192.6,288.2Z" fill="#a9c1dc"/>
<path d="M180.9,256.5 184.1,255.3 184.6,262.6 182.1,264.3Z" fill="#c6d0dc"/>
<path d="M206.7,271.6 209.6,270.6 209.4,278.4 207.0,278.9Z" fill="#c6d0dc"/>
<path d="M172.4,158.7 178.0,154.3 178.7,155.8 173.4,160.2Z" fill="#c6d0dc"/>
<path d="M247.3,294.2 241.3,288.2 238.8,285.7 240.0,276.0 236.4,266.3 237.6,257.7 241.3,253.6 247.3,249.2 254.6,241.9 261.9,234.6 266.8,222.5 274.1,210.3 271.7,200.6 279.0,189.6 288.7,182.3 297.2,172.6 308.2,166.5 317.9,159.2 327.6,155.5 337.4,155.5 344.7,159.2 352.0,164.1 360.0,166.5 350.0,172.0 350.0,120.0 950.0,120.0 941.7,266.3 936.1,267.5 930.8,269.9 927.1,261.4 914.9,262.6 904.0,276.0 902.8,284.5 890.6,286.9 883.3,282.1 868.7,283.3 851.7,284.5 841.9,295.5 827.3,310.0 817.6,319.8 826.1,321.0 828.6,329.5 834.6,324.6 841.9,331.9 844.5,336.0 843.2,348.9 840.6,359.3 835.4,372.3 827.6,382.7 819.8,393.1 812.1,402.1 801.7,400.8 796.5,407.3 791.3,412.5 787.4,419.0 788.7,426.8 793.9,434.6 792.6,445.0 786.1,448.9 779.6,450.2 778.3,439.8 775.7,430.7 773.1,421.6 770.0,416.9 762.7,419.5 758.9,424.2 755.5,423.7 755.0,416.4 749.8,417.7 744.6,421.6 739.9,425.5 741.5,430.7 747.2,432.0 755.0,430.7 761.4,434.6 755.0,438.5 749.8,442.4 747.2,447.6 751.1,454.0 753.7,461.8 756.3,468.3 758.9,474.8 755.5,482.6 751.1,491.7 745.9,500.8 736.8,507.2 723.8,513.7 709.5,517.6 701.8,521.5 697.9,515.6 691.4,517.6 686.2,510.4 693.4,515.0 694.6,518.7 689.8,522.3 694.6,529.6 701.9,540.6 702.4,552.7 700.7,561.2 692.2,567.3 684.9,572.2 682.5,575.8 681.3,568.5 678.8,566.1 675.2,563.7 671.5,557.6 670.3,553.9 665.5,552.7 661.8,555.2 659.4,562.5 656.9,572.2 660.6,581.9 667.9,586.8 675.2,594.1 681.3,602.6 680.0,608.7 677.6,608.7 670.3,602.6 663.0,591.7 656.9,580.7 653.8,568.5 652.8,555.2 648.9,541.8 646.0,540.6 642.3,541.8 637.5,535.7 633.8,524.7 629.0,516.2 621.7,513.8 614.4,515.0 611.9,515.0 602.2,522.3 592.5,530.8 582.7,538.1 573.0,546.6 570.6,560.0 565.7,569.8 560.8,577.1 557.2,573.4 551.1,560.0 545.0,543.0 540.1,528.4 536.5,515.0 529.2,518.7 521.9,511.4 524.3,506.5 514.6,502.8 500.0,496.8 498.4,496.9 488.5,498.2 478.6,498.2 468.7,495.7 467.4,488.3 466.2,489.5 467.4,500.6 474.9,505.6 481.1,511.8 474.9,520.4 468.7,527.8 458.8,534.0 450.1,539.0 446.4,543.9 436.5,547.6 426.6,551.4 414.2,555.1 408.1,556.3 410.5,568.7 416.7,565.0 429.1,563.7 441.5,561.3 442.7,566.2 439.0,574.9 432.8,586.0 425.4,594.7 414.2,605.8 404.3,615.7 398.2,620.6 390.7,633.0 392.0,630.0 389.2,633.7 388.3,641.2 390.2,654.2 393.9,665.4 394.8,680.4 391.1,687.8 381.8,695.3 374.3,704.6 370.6,710.2 371.5,719.5 368.7,728.9 361.2,733.5 359.4,740.1 355.7,749.4 348.2,758.7 340.7,766.2 331.4,773.6 322.1,776.4 310.9,778.3 302.5,780.2 296.0,775.5 295.0,768.0 290.4,756.8 287.6,746.6 282.0,734.5 279.2,723.3 275.4,712.1 269.8,700.9 266.1,689.7 269.8,674.8 274.5,661.7 271.7,650.5 268.0,639.3 262.4,630.0 262.6,630.6 256.5,622.1 254.1,616.0 256.5,608.7 256.5,601.4 254.1,591.7 249.2,595.3 239.5,594.1 234.6,586.8 226.1,586.8 213.9,589.2 203.0,591.7 190.8,591.7 178.7,594.1 172.6,589.2 165.3,584.4 156.8,577.1 150.7,573.4 147.0,567.3 140.9,563.7 142.2,560.0 138.5,553.9 136.1,547.9 138.5,540.6 140.9,528.4 138.5,516.2 142.2,506.5 148.2,496.8 154.3,487.0 155.5,485.8 155.5,485.9 157.1,482.2 166.2,474.1 171.3,461.9 176.4,453.8 182.4,447.7 187.5,442.7 189.5,441.2 184.5,439.6 181.4,434.6 175.3,434.6 176.4,425.4 174.3,417.3 176.4,409.2 173.3,401.1 183.5,398.1 195.6,400.1 206.8,399.1 208.8,388.9 205.8,378.8 201.7,373.7 193.6,369.7 194.6,366.2 204.7,365.6 203.7,360.6 210.8,356.5 216.9,357.5 218.9,353.5 226.0,350.4 232.1,343.3 234.1,336.2 240.2,332.6 245.3,331.8 246.9,327.1 252.4,323.6 253.4,320.0 253.4,319.9 250.1,313.4 249.3,306.9 251.8,301.2 257.4,298.0 260.4,297.5Z" fill="#7ba4c9"/>
<path d="M941.7,272.3 936.1,276.0 929.5,280.9 917.4,295.5 911.3,310.0 910.1,324.6 913.7,346.1 912.0,336.0 914.6,348.9 921.1,338.5 928.9,330.8 941.8,317.8Z" fill="#79adb9"/>
<path d="M846.8,325.9 854.1,324.6 855.3,346.1 852.3,332.1 854.9,343.7 857.5,356.7 860.1,364.5 854.9,377.5 849.7,381.4 848.4,369.7 848.4,348.9 846.6,333.4Z" fill="#79adb9"/>
<path d="M847.1,387.9 853.6,393.1 862.7,396.9 861.4,400.8 853.6,406.0 845.8,404.7 840.6,409.9 839.3,404.7 843.2,398.2Z" fill="#7ccb93"/>
<path d="M840.1,414.6 846.3,413.3 849.4,421.6 847.4,432.5 842.2,441.1 836.5,446.5 825.6,449.1 817.8,454.3 807.4,455.6 799.1,456.9 797.3,451.4 806.3,446.8 816.2,443.7 826.1,437.2 833.3,428.6 837.5,421.1Z" fill="#7ccb93"/>
<path d="M805.6,455.3 814.7,451.4 817.2,454.0 809.5,459.2Z" fill="#7ccb93"/>
<path d="M795.2,455.3 801.7,456.6 801.7,463.1 799.1,468.3 795.2,464.4Z" fill="#7ccb93"/>
<path d="M752.9,499.5 756.3,498.2 757.0,507.2 754.4,513.7 751.8,507.2Z" fill="#9db9d2"/>
<path d="M699.2,525.4 705.6,522.8 709.5,526.7 704.3,531.9 699.2,530.6Z" fill="#7dd884"/>
<path d="M569.3,571.0 574.2,572.2 579.1,578.3 577.9,584.4 573.0,586.8 570.1,580.7Z" fill="#7ba4c9"/>
<path d="M751.8,532.0 757.9,530.8 760.3,538.1 757.9,545.4 761.6,552.7 759.1,553.9 754.3,550.3 750.6,543.0Z" fill="#7bc49c"/>
<path d="M767.6,577.1 774.9,573.4 778.6,579.5 776.2,586.8 771.3,588.0 768.9,583.1Z" fill="#7bc49c"/>
<path d="M760.3,563.7 765.2,562.5 766.4,567.3 762.8,569.8Z" fill="#7bc49c"/>
<path d="M767.6,566.1 772.5,564.9 773.7,571.0 769.6,572.2Z" fill="#7bc49c"/>
<path d="M763.3,556.4 767.6,555.2 768.9,560.0 765.2,560.5Z" fill="#7bc49c"/>
<path d="M736.5,579.0 747.7,565.4 748.7,566.6 738.0,580.0Z" fill="#c6d0dc"/>
<path d="M638.7,590.0 646.0,591.7 655.7,601.4 667.9,611.1 677.6,618.4 686.1,625.7 687.3,635.5 686.1,640.3 680.0,639.1 670.3,630.6 660.6,620.9 650.9,608.7 643.6,599.0Z" fill="#7cce90"/>
<path d="M686.1,641.5 694.6,642.7 706.8,645.2 719.0,648.8 723.8,652.5 714.1,653.0 701.9,650.0 692.2,647.6 686.1,645.2Z" fill="#7cce90"/>
<path d="M700.7,608.7 705.6,609.9 711.7,602.6 721.4,597.7 727.5,591.7 734.8,584.4 743.3,589.2 745.7,590.4 739.7,595.3 742.1,605.0 743.3,611.1 738.4,616.0 739.7,620.9 733.6,628.2 728.7,631.8 719.0,628.2 711.7,628.2 705.6,625.7 701.9,616.0Z" fill="#7cce90"/>
<path d="M745.7,620.9 750.6,618.4 753.0,611.1 762.8,609.9 772.5,607.5 771.3,611.1 762.8,613.6 756.7,616.0 754.3,622.1 760.3,628.2 761.6,633.0 756.7,630.6 753.0,626.9 751.8,637.9 748.2,639.1 747.0,628.2Z" fill="#7cce90"/>
<path d="M727.5,651.3 734.8,652.0 733.6,654.4 727.5,653.7Z" fill="#7cce90"/>
<path d="M737.2,652.5 745.7,653.0 753.0,654.9 751.8,656.9 743.3,655.4 737.2,654.9Z" fill="#7cce90"/>
<path d="M766.4,655.4 774.9,651.3 782.2,650.5 781.8,653.0 773.7,654.9 767.6,657.8Z" fill="#a9c1dc"/>
<path d="M779.8,625.7 783.5,616.0 785.9,617.2 784.7,625.7 782.2,630.6Z" fill="#7cce90"/>
<path d="M779.8,631.8 794.4,629.4 795.6,631.1 782.2,633.5Z" fill="#7cce90"/>
<path d="M799.7,619.7 808.5,617.6 812.9,623.0 809.6,627.4 817.2,628.5 828.2,623.0 834.8,623.0 843.6,627.4 852.4,629.6 861.1,634.0 865.5,638.4 863.3,642.8 869.9,649.4 876.5,654.8 883.1,659.2 878.7,660.3 869.9,658.1 863.3,652.7 856.7,649.4 852.4,654.8 843.6,655.9 839.2,652.7 830.4,651.6 837.0,647.2 832.6,640.6 823.8,636.2 815.1,632.9 808.5,630.7 805.2,624.1Z" fill="#7cce90"/>
<path d="M877.6,640.6 887.5,639.5 895.1,635.1 896.7,632.9 894.0,636.9 885.3,642.1Z" fill="#7aa9bf"/>
<path d="M905.0,639.5 909.4,642.8 908.3,643.9 904.6,640.8Z" fill="#9db9d2"/>
<path d="M913.8,647.2 920.4,652.7 919.3,654.0 912.9,648.7Z" fill="#9db9d2"/>
<path d="M923.7,655.9 930.2,662.5 929.1,664.1 922.6,657.5Z" fill="#9db9d2"/>
<path d="M721.8,718.5 729.5,711.9 740.5,707.5 751.4,704.2 760.2,696.5 762.4,691.0 771.2,685.6 777.8,679.0 784.3,680.1 785.4,684.5 793.1,680.1 795.3,672.4 804.1,668.0 812.9,668.0 821.6,671.3 819.4,681.2 826.0,686.7 832.6,690.0 840.3,695.4 844.7,692.1 846.9,679.0 849.1,665.8 852.4,668.0 855.6,676.8 863.3,684.5 865.5,694.3 872.1,703.1 880.9,711.9 887.5,720.7 896.2,731.6 898.4,744.8 897.3,758.0 892.9,771.1 887.5,782.1 885.3,786.5 834.8,786.5 830.4,779.9 828.2,771.1 823.8,779.9 819.4,775.5 812.9,766.7 799.7,763.4 786.5,764.5 775.6,768.9 766.8,773.3 755.8,775.5 742.7,781.0 733.9,781.0 728.4,775.5 731.7,768.9 728.4,758.0 724.0,744.8 721.8,736.0 718.5,731.6Z" fill="#7ba4c9"/>
<path d="M434.0,671.0 436.8,676.6 437.7,684.1 434.0,693.4 430.3,704.6 426.5,717.7 423.7,728.9 416.3,732.6 409.7,728.9 407.9,717.7 409.7,708.3 411.6,695.3 416.3,687.8 424.7,684.1 430.3,676.6Z" fill="#7ba4c9"/>
<path d="M908.1,354.6 909.9,353.6 910.7,354.9 908.9,355.9Z" fill="#c6d0dc"/>
<path d="M901.6,363.2 903.4,362.2 904.2,363.5 902.4,364.5Z" fill="#c6d0dc"/>
<path d="M895.1,370.2 896.9,369.2 897.7,370.5 895.9,371.5Z" fill="#c6d0dc"/>
<path d="M888.6,376.2 890.4,375.1 891.2,376.4 889.4,377.5Z" fill="#c6d0dc"/>
<path d="M882.1,381.4 884.0,380.3 884.7,381.6 882.9,382.7Z" fill="#c6d0dc"/>
<path d="M875.6,386.6 877.5,385.5 878.2,386.8 876.4,387.9Z" fill="#c6d0dc"/>
<path d="M869.7,391.0 871.5,389.9 872.3,391.2 870.5,392.3Z" fill="#c6d0dc"/>
<path d="M139.3,482.6 142.4,480.6 141.6,483.1Z" fill="#ced6e0"/>
<path d="M144.2,484.1 146.0,482.6 146.0,484.1Z" fill="#ced6e0"/>
<path d="M150.9,482.6 152.7,479.5 152.7,482.1Z" fill="#ced6e0"/>
<path d="M153.2,478.5 154.5,477.0 154.5,478.5Z" fill="#ced6e0"/>
<path d="M137.5,459.0 140.2,458.2 139.8,459.3Z" fill="#ced6e0"/>
<path d="M105.4,546.2 109.9,544.8 109.9,546.2Z" fill="#ced6e0"/>
<path d="M101.9,536.9 104.1,536.0 103.6,537.4Z" fill="#ced6e0"/>
<path d="M99.6,431.4 102.3,430.2 101.9,431.4Z" fill="#ced6e0"/>
<path d="M87.6,426.8 89.8,426.2 89.4,427.4Z" fill="#ced6e0"/>
<path d="M461.3,710.2 463.6,709.2 463.1,711.1Z" fill="#ced6e0"/>
<path d="M470.7,705.9 472.5,704.9 472.0,706.8Z" fill="#ced6e0"/>
<path d="M407.8,666.3 408.7,665.4 408.5,667.0Z" fill="#ced6e0"/>
<path d="M453.8,557.3 457.8,556.8 456.4,557.7Z" fill="#ced6e0"/>
<path d="M539.8,595.7 540.7,593.9 540.3,596.6Z" fill="#ced6e0"/>
<path d="M628.1,561.4 629.5,553.6 629.0,560.9Z" fill="#ced6e0"/>
<path d="M632.6,582.2 633.5,580.9 633.3,582.7Z" fill="#ced6e0"/>
</g><g clip-path="url(#landclip)" stroke-width=".95" stroke-linejoin="round">
<path d="M264.2,285.0 266.9,279.8 267.8,277.1 270.4,275.3 270.9,271.7 269.1,267.1 272.2,263.4 268.7,260.6 269.1,254.9 268.2,245.1 271.3,239.1 277.1,232.9 275.8,231.8 278.5,226.6 279.8,215.8 283.8,213.5 287.8,203.3 286.5,199.9 291.9,192.8 295.4,187.9 303.9,189.1 306.4,181.0 309.7,178.0 314.2,184.2 318.2,186.1 325.8,186.7 329.8,181.8 330.7,172.9 339.1,167.9 344.5,172.9 343.6,181.1 366.3,216.9 366.3,276.2 321.7,278.0 303.9,282.4 301.7,297.8 281.6,316.3 271.8,316.3 271.3,313.2 271.1,309.6 267.3,306.0 264.7,297.8 263.3,288.5Z" fill="#a9c1dc" stroke="#ccd0d5"/>
<path d="M248.1,318.7 253.1,318.7 257.1,319.4 260.2,319.8 266.0,306.0 263.8,293.6 248.1,297.8Z" fill="#a9c1dc" stroke="#ccd0d5"/>
<path d="M306.1,301.9 307.9,314.8 308.8,315.5 312.8,317.1 316.4,318.7 315.9,322.5 319.5,325.6 319.5,326.3 321.3,335.3 318.2,338.3 320.2,343.3 326.2,341.2 336.0,343.3 344.9,344.8 351.2,345.5 356.5,339.7 370.8,340.4 370.8,276.2 339.6,278.0 317.3,280.6 308.4,289.3Z" fill="#a9c1dc" stroke="#ccd0d5"/>
<path d="M333.3,366.6 337.4,365.3 341.8,367.6 344.9,369.0 346.7,375.6 348.9,378.8 343.6,378.5 340.5,384.6 340.0,377.5 336.0,371.0Z" fill="#a9c1dc" stroke="#ccd0d5"/>
<path d="M284.9,386.5 290.1,386.2 299.4,388.4 299.7,384.6 299.0,381.7 305.0,380.4 310.6,386.5 315.9,390.9 314.6,395.3 317.3,399.0 314.6,404.5 310.6,404.8 306.6,407.2 304.3,403.0 301.2,407.2 299.0,406.9 297.0,403.0 293.4,400.2 291.9,398.4 288.3,394.1 284.9,389.1Z" fill="#a9c1dc" stroke="#ccd0d5"/>
<path d="M301.0,407.1 303.0,403.3 306.1,405.1 306.6,407.2 306.1,410.5 308.4,413.1 306.6,417.6 303.9,419.9 299.4,418.7 299.4,409.3Z" fill="#7aaab9" stroke="#edf2f8"/>
<path d="M226.1,347.1 228.5,349.1 233.4,354.7 236.3,353.6 236.6,356.1 240.6,357.8 243.0,358.3 244.6,360.2 251.3,361.8 248.6,371.0 245.9,372.3 241.9,378.2 241.9,380.4 245.0,378.8 245.9,382.1 245.0,382.7 246.4,385.9 244.4,387.2 245.9,389.7 245.5,391.9 249.0,393.1 248.1,395.6 241.5,403.3 230.3,406.3 228.7,403.6 222.7,403.9 217.8,401.8 212.5,401.4 208.5,399.9 206.7,398.1 201.3,394.1 187.9,364.9 205.8,354.7 221.4,346.2Z" fill="#79abb9" stroke="#edf2f8"/>
<path d="M248.1,395.6 249.0,393.1 245.5,391.9 245.9,389.7 244.4,387.2 246.4,385.9 245.0,382.7 245.9,382.1 249.9,381.7 252.4,378.5 254.8,382.4 256.2,378.2 259.7,379.8 261.3,375.6 268.7,374.9 270.0,376.9 275.8,378.2 274.5,380.1 275.4,382.7 276.2,384.0 274.0,385.9 273.6,389.1 283.8,401.4 295.0,410.5 299.4,418.1 298.5,429.7 283.8,433.6 272.7,421.1 259.3,409.3 257.1,397.2 248.1,396.5Z" fill="#7cc898" stroke="#edf2f8"/>
<path d="M303.9,419.9 306.6,417.6 308.4,413.1 316.8,410.2 324.0,409.0 331.1,410.2 332.2,408.1 333.3,410.2 332.0,412.6 330.9,413.7 330.7,421.1 324.0,440.9 310.6,440.9 301.7,426.8Z" fill="#7cc29f" stroke="#edf2f8"/>
<path d="M329.2,409.6 331.8,409.6 334.4,408.3 337.6,407.2 339.6,408.3 342.2,410.9 347.4,412.9 352.6,411.5 357.9,410.2 363.1,408.3 368.3,407.6 373.5,408.9 381.4,411.5 387.9,413.5 394.4,412.2 399.6,411.5 404.8,411.5 408.8,413.5 410.7,417.4 412.0,421.3 410.7,423.9 412.0,429.2 412.7,435.0 407.5,435.7 403.5,435.0 398.3,437.0 390.5,437.7 384.0,438.3 378.7,439.0 376.1,440.9 374.8,443.5 368.3,443.5 357.9,440.9 344.8,442.2 337.0,437.0 331.8,430.5 329.2,422.6 327.8,414.8Z" fill="#7dd38a" stroke="#edf2f8"/>
<path d="M373.9,441.4 376.2,441.7 378.4,439.5 379.7,437.0 387.7,437.0 396.7,434.7 403.6,434.7 398.5,438.1 397.6,449.6 387.7,455.0 378.8,460.8 374.4,458.5 374.8,455.0 377.9,450.7 377.5,449.1 375.0,448.2 373.5,445.3Z" fill="#7aa9bf" stroke="#edf2f8"/>
<path d="M414.5,420.3 411.2,421.6 412.7,427.4 412.3,430.2 414.5,434.2 417.2,440.9 420.8,445.3 418.1,448.5 417.6,452.3 420.8,456.1 427.9,463.5 427.4,467.7 428.8,470.5 431.2,473.1 435.5,473.9 439.0,479.0 444.4,486.6 451.1,491.6 460.0,492.1 467.1,489.6 471.1,497.1 489.4,499.1 489.4,497.1 490.6,492.1 497.0,489.9 494.8,487.1 494.8,481.8 489.4,478.0 486.1,473.6 490.3,467.7 486.3,465.1 484.5,453.4 484.8,450.1 487.7,443.1 487.4,437.2 483.6,437.2 479.2,432.5 470.3,428.5 464.5,429.1 459.1,432.5 455.1,433.3 453.3,432.5 442.2,430.8 435.5,429.7 432.8,427.4 428.8,425.1 430.6,421.6 427.9,419.9 422.1,424.5Z" fill="#7dd787" stroke="#edf2f8"/>
<path d="M487.5,446.7 493.5,444.7 501.7,436.6 511.8,434.6 517.9,435.6 526.0,432.5 531.1,430.5 533.1,437.6 542.2,435.6 548.3,436.6 540.2,439.6 533.1,443.7 532.1,449.8 529.0,457.9 525.0,464.0 517.9,466.0 511.8,474.1 501.7,477.1 489.5,477.1 486.4,464.0 484.4,453.8Z" fill="#7aa8bf" stroke="#edf2f8"/>
<path d="M489.5,477.1 501.7,477.1 511.8,474.1 517.9,466.0 525.0,464.0 529.0,457.9 532.1,449.8 533.1,443.7 540.2,439.6 548.3,436.6 554.4,441.7 562.5,449.8 558.4,461.9 552.3,478.2 542.2,492.3 534.1,502.5 485.4,502.5 489.5,494.4 496.6,488.3 493.5,482.2 486.4,477.1Z" fill="#7aabba" stroke="#edf2f8"/>
<path d="M518.9,504.5 531.4,501.0 526.9,490.6 526.0,488.3 534.1,482.2 540.2,476.1 544.2,468.0 548.3,459.9 546.3,451.8 552.3,449.8 559.4,446.7 564.5,453.8 566.5,461.9 565.5,467.0 571.6,471.1 571.6,475.1 582.8,482.2 592.9,488.3 607.1,493.1 614.4,491.9 626.5,489.5 638.7,484.6 648.4,483.4 654.5,487.0 653.3,494.3 648.4,501.6 641.1,496.8 636.3,504.1 632.6,510.1 627.7,506.5 626.5,513.8 621.7,512.6 611.9,518.7 597.3,533.3 577.9,550.3 568.1,572.2 560.8,581.9 553.5,577.1 541.4,543.0 534.1,522.3 525.5,522.3 518.2,512.6 520.7,506.5Z" fill="#7ab2ae" stroke="#edf2f8"/>
<path d="M608.3,493.1 616.8,496.8 626.5,499.2 629.0,506.5 627.7,515.0 621.7,516.2 614.4,517.4 609.5,506.5Z" fill="#7aabb8" stroke="#edf2f8"/>
<path d="M626.5,489.0 638.7,484.1 639.9,487.5 627.7,491.9Z" fill="#a9c1dc" stroke="#ccd0d5"/>
<path d="M604.0,361.6 595.9,373.7 582.8,378.8 580.7,385.9 572.6,390.0 574.6,400.1 569.6,405.2 558.4,409.2 548.3,415.3 543.2,423.4 548.3,429.5 548.3,435.6 554.4,441.7 559.4,446.7 564.5,453.8 566.5,461.9 565.5,467.0 571.6,471.1 580.7,477.1 592.9,482.2 603.0,484.2 613.2,483.2 607.1,480.9 621.7,477.3 636.3,480.9 648.4,483.4 654.5,487.0 653.3,494.3 655.7,501.6 660.6,511.4 667.9,515.0 675.2,510.1 684.9,507.7 693.4,515.0 686.2,510.4 697.9,525.4 710.8,533.7 713.4,523.3 742.0,510.4 749.0,499.5 751.3,494.8 757.6,484.4 762.2,476.1 758.9,455.3 765.3,434.6 767.9,422.1 770.0,416.9 778.3,412.5 790.0,407.3 799.1,399.5 801.7,389.2 810.8,385.3 813.4,374.9 814.7,368.4 799.1,371.0 796.5,363.2 783.5,356.7 778.3,343.7 773.1,333.4 762.7,330.8 752.4,334.7 749.8,346.3 734.2,358.0 730.3,368.4 738.1,369.7 748.5,377.5 736.8,380.1 723.8,386.6 712.1,393.1 708.2,399.5 695.3,404.7 682.3,409.9 666.7,404.7 646.0,402.1 638.2,393.1 620.0,387.9 619.3,386.9 620.3,380.8 618.2,372.7 609.1,367.6Z" fill="#7dd884" stroke="#edf2f8"/>
<path d="M671.5,552.7 682.5,550.3 689.8,549.1 697.1,550.3 694.6,558.8 687.3,563.7 681.3,567.3 675.2,564.9 670.3,558.8Z" fill="#a9c1dc" stroke="#ccd0d5"/>
<path d="M446.4,529.1 461.3,524.1 460.0,514.2 461.3,511.8 446.4,504.3 445.2,499.4 453.8,501.9 461.3,498.2 463.7,490.7 467.4,487.0 471.2,500.6 478.6,505.6 484.8,511.8 477.3,522.9 469.9,530.3 460.0,536.5 450.1,540.2Z" fill="#a9c1dc" stroke="#ccd0d5"/>
<path d="M422.9,474.1 426.6,472.7 429.6,477.1 426.6,479.6 423.6,477.6Z" fill="#a9c1dc" stroke="#ccd0d5"/>
<path d="M352.1,171.6 343.6,181.1 341.8,191.6 348.5,197.5 344.5,206.8 348.9,220.1 347.2,229.8 350.7,235.0 348.5,240.6 355.2,249.0 348.5,259.6 338.7,271.2 340.0,281.1 336.9,286.7 337.8,294.4 338.7,299.4 340.5,308.4 352.1,313.2 352.5,319.4 360.5,329.4 354.7,332.4 356.5,339.7 368.1,341.9 373.5,351.9 384.2,355.4 394.0,357.4 391.8,369.0 385.1,374.3 379.7,378.2 377.9,386.5 381.9,392.2 388.6,397.2 393.1,397.8 404.2,399.0 413.2,402.1 421.6,406.9 425.7,410.5 431.5,407.2 435.5,406.3 434.6,394.1 433.2,378.8 431.7,378.8 423.6,368.7 422.6,357.5 429.7,352.4 440.8,344.3 451.0,345.3 458.1,351.4 465.2,349.4 475.3,350.4 485.4,351.4 490.5,346.4 482.4,341.3 487.5,335.2 486.4,327.1 497.6,326.1 512.0,321.0 518.0,317.5 530.0,317.5 531.5,322.0 532.1,325.1 542.2,330.1 556.4,324.1 563.5,335.2 570.6,348.4 580.7,350.4 590.9,355.5 601.0,359.5 604.0,361.6 607.1,359.5 615.2,354.5 623.3,350.4 630.0,349.4 635.6,356.7 648.5,356.7 651.1,348.9 655.0,341.1 669.3,347.6 682.3,354.1 695.3,359.3 705.6,360.6 722.5,354.1 734.2,358.0 749.8,346.3 752.4,334.7 762.7,330.8 773.1,333.4 778.3,343.7 783.5,356.7 796.5,363.2 799.1,371.0 814.7,368.4 813.4,374.9 810.8,385.3 801.7,389.2 799.1,399.5 801.7,400.8 815.0,403.0 838.0,384.5 880.0,384.5 960.0,370.0 960.0,100.0 352.0,100.0Z" fill="#79adb9" stroke="#edf2f8"/>
<path d="M302.1,322.1 303.9,318.3 308.8,315.5 312.8,317.1 316.4,318.7 315.9,322.5Z" fill="#79adb9" stroke="#edf2f8"/>
<path d="M175.0,485.8 176.2,479.7 195.7,470.0 206.7,445.3 253.5,434.2 251.7,438.1 251.3,448.0 248.1,452.3 255.1,461.9 257.1,471.3 258.9,490.6 268.1,505.4 267.5,507.7 237.1,524.7 229.8,528.4 227.3,527.2 175.0,488.2Z" fill="#7babb9" stroke="#edf2f8"/>
<path d="M326.2,464.0 326.2,512.7 379.3,512.7 373.0,503.0 367.7,485.6 360.1,473.4 370.4,475.4 367.5,466.4 357.4,463.5Z" fill="#7aa6c4" stroke="#edf2f8"/>
<path d="M155.5,485.8 175.0,485.8 175.0,488.2 227.3,527.2 229.8,528.4 237.1,524.7 267.5,507.7 280.9,510.1 284.5,507.7 319.8,524.7 321.0,543.0 314.9,547.9 312.5,555.2 317.3,566.1 310.0,567.3 297.9,574.6 290.6,578.3 282.1,581.9 278.9,572.2 282.1,564.9 277.2,563.7 273.6,569.8 268.7,577.1 261.4,583.1 254.1,589.2 252.9,595.3 239.5,599.0 203.0,596.5 166.5,591.7 134.9,567.3 130.0,543.0 134.9,506.5Z" fill="#a9c1dc" stroke="#ccd0d5"/>
<path d="M200.6,566.1 213.9,565.4 217.6,572.2 218.8,580.7 216.4,590.4 203.0,593.6 200.6,584.4Z" fill="#7ba4c9" stroke="#edf2f8"/>
<path d="M154.3,570.5 162.8,569.3 168.2,575.4 167.0,582.4 160.4,579.5 154.3,575.1Z" fill="#7ba4c9" stroke="#edf2f8"/>
<path d="M295.5,594.1 305.2,592.9 314.9,595.3 327.1,591.7 336.8,591.7 349.0,596.5 351.4,601.4 346.5,613.6 345.3,620.9 342.9,628.2 345.3,637.9 349.0,647.6 352.6,653.7 341.7,654.9 342.9,664.6 346.5,671.9 341.7,674.4 334.4,668.3 322.2,664.6 312.5,665.9 311.3,650.0 300.3,647.6 291.8,651.3 288.2,641.5 269.9,641.5 262.6,640.3 266.3,637.9 276.0,635.5 283.3,630.6 285.7,620.9 293.0,611.1 295.5,602.6Z" fill="#a9c1dc" stroke="#ccd0d5"/>
<path d="M322.2,575.8 329.5,569.8 336.8,572.2 349.0,567.3 357.5,566.1 361.1,562.5 364.8,568.5 366.0,577.1 370.9,584.4 369.7,590.4 361.1,595.3 351.4,597.7 344.1,595.3 336.8,589.2 329.5,581.9Z" fill="#a9c1dc" stroke="#ccd0d5"/>
<path d="M256.8,640.3 269.8,641.2 286.6,640.3 291.3,650.5 301.6,645.9 310.9,647.7 311.8,665.4 321.1,665.4 320.2,673.8 311.8,674.8 311.8,684.1 314.6,691.6 322.1,694.4 331.4,695.3 337.0,693.4 342.6,687.8 348.2,686.0 351.9,686.9 359.4,691.6 361.2,700.9 359.4,710.2 351.9,717.7 340.7,717.7 333.3,723.3 327.7,730.7 322.1,734.5 314.6,733.5 307.2,739.1 303.4,730.7 302.5,740.1 299.7,748.4 291.3,749.4 287.6,746.6 277.3,741.9 258.7,695.3 258.7,658.0Z" fill="#a9c1dc" stroke="#ccd0d5"/>
<path d="M408.1,571.2 414.2,574.9 425.4,579.8 411.8,593.4 398.2,600.9 396.9,608.3 398.2,623.1 414.2,610.7 443.9,578.6 448.9,558.8 429.1,562.5 416.7,563.7 410.5,568.7Z" fill="#a9c1dc" stroke="#ccd0d5"/>
<path d="M256.5,606.3 263.8,606.3 263.8,610.4 256.5,610.4Z" fill="#a9c1dc" stroke="#ccd0d5"/>
<path d="M287.6,746.6 291.3,749.4 299.7,748.4 302.5,740.1 303.4,730.7 307.2,739.1 314.6,733.5 322.1,734.5 327.7,730.7 333.3,723.3 340.7,717.7 351.9,717.7 355.7,723.3 356.6,734.5 361.2,734.5 370.6,741.9 351.9,779.2 296.0,788.6 282.9,760.6Z" fill="#7aa6c6" stroke="#edf2f8"/>
<path d="M334.2,753.1 340.7,748.4 345.4,752.2 338.9,758.7Z" fill="#a9c1dc" stroke="#ccd0d5"/>
<path d="M351.5,736.3 354.7,734.5 357.1,738.2 354.7,741.5 351.9,740.1Z" fill="#a9c1dc" stroke="#ccd0d5"/>
<path d="M706.8,611.1 719.0,608.7 728.7,605.0 731.1,596.5 739.7,595.3 745.7,590.4 750.6,586.8 733.6,577.1 706.8,599.0 700.7,609.2Z" fill="#7ba4c9" stroke="#edf2f8"/>
<path d="M843.1,621.9 887.5,621.9 887.5,665.8 843.1,665.8Z" fill="#7aa9bf" stroke="#edf2f8"/>
</g><g fill="none" stroke-width=".9" clip-path="url(#landclip)">
<path d="M175.2,406.9 178.1,405.7 185.3,406.6 187.0,408.7 183.9,412.3 183.5,419.9 181.2,420.2 183.5,428.5 181.2,434.2" stroke="#edf2f8"/>
<path d="M246.8,330.9 246.1,336.1 244.6,340.4 241.5,341.9 241.5,349.1 243.0,358.3" stroke="#edf2f8"/>
<path d="M229.9,345.1 233.9,344.8 237.0,344.4 241.0,347.6 241.5,349.1" stroke="#edf2f8"/>
<path d="M278.3,326.3 278.9,331.6 277.6,333.8 280.3,339.7 281.4,344.8 280.9,348.3" stroke="#edf2f8"/>
<path d="M280.9,348.3 278.5,347.6 272.7,351.5 269.1,352.9 270.4,356.7 276.2,363.2" stroke="#edf2f8"/>
<path d="M276.2,363.2 272.7,366.3 271.8,370.6 272.9,371.6 269.1,370.6 263.8,372.3 261.5,371.3 257.5,371.3 253.1,370.0 248.6,371.0" stroke="#edf2f8"/>
<path d="M257.5,371.3 257.3,374.3 261.3,375.6" stroke="#edf2f8"/>
<path d="M280.9,348.3 283.4,349.1 287.4,350.1 287.0,351.9 290.1,351.9 293.6,352.6 298.8,357.8" stroke="#edf2f8"/>
<path d="M276.2,363.2 281.6,361.5 290.3,364.3 291.4,362.6 298.8,357.8" stroke="#edf2f8"/>
<path d="M298.8,357.8 301.7,357.8 304.3,360.2 308.4,358.8 315.3,360.9 315.9,357.4 322.2,350.5 320.2,343.3" stroke="#edf2f8"/>
<path d="M290.3,364.3 291.2,368.3 298.5,369.6 303.0,367.3 307.5,364.6 313.5,365.6 315.3,360.9" stroke="#edf2f8"/>
<path d="M291.2,368.3 288.1,372.3 286.5,375.9 281.6,377.5 275.8,378.2" stroke="#edf2f8"/>
<path d="M313.5,365.6 316.8,368.3 312.8,371.6 309.3,378.8 305.0,380.4" stroke="#edf2f8"/>
<path d="M286.5,375.9 288.5,378.2 291.9,381.7 299.0,381.7" stroke="#edf2f8"/>
<path d="M275.4,384.6 279.8,384.6 282.9,384.6 284.5,380.1 288.5,378.2" stroke="#edf2f8"/>
<path d="M316.8,368.3 325.8,370.0 333.3,366.6" stroke="#edf2f8"/>
<path d="M340.5,384.6 347.2,386.5" stroke="#edf2f8"/>
<path d="M315.9,392.8 317.3,395.3 328.4,396.2 335.1,393.4 342.3,395.6" stroke="#edf2f8"/>
<path d="M314.6,404.5 316.8,410.2" stroke="#edf2f8"/>
<path d="M306.6,407.2 310.6,404.8" stroke="#edf2f8"/>
<path d="M400.0,409.3 408.7,411.7 415.4,410.8 422.1,411.7 421.6,406.9" stroke="#edf2f8"/>
<path d="M408.7,411.7 409.8,414.0 414.5,419.9" stroke="#edf2f8"/>
<path d="M415.4,410.8 418.1,413.4 419.9,417.0 422.1,421.1 422.1,424.5" stroke="#edf2f8"/>
<path d="M389.5,461.6 394.9,463.0 402.5,467.2 414.1,477.0 422.1,477.5 427.4,472.9 428.8,472.9" stroke="#edf2f8"/>
<path d="M387.7,455.0 389.5,461.6 379.7,465.1 384.2,470.3 381.9,472.9 378.6,473.6 375.3,477.0 370.6,476.2" stroke="#edf2f8"/>
<path d="M373.3,458.7 373.3,465.1 372.6,468.2 370.6,475.4" stroke="#edf2f8"/>
<path d="M371.2,456.6 374.8,455.0" stroke="#edf2f8"/>
<path d="M266.0,456.1 260.6,464.0 257.1,471.3" stroke="#edf2f8"/>
<path d="M569.6,405.2 558.4,401.1 546.3,401.1 536.1,403.1 528.0,407.2 519.9,415.3 511.8,411.2 505.7,399.1 493.5,397.0 483.4,391.0 475.3,385.9 464.1,388.9 464.1,411.2 457.0,407.2 451.0,405.2" stroke="#edf2f8"/>
<path d="M464.1,411.2 469.2,407.2 475.3,403.1 481.4,409.2 489.5,413.3 493.5,421.4 501.7,427.5 511.8,434.6" stroke="#edf2f8"/>
<path d="M519.9,415.3 521.9,421.4 514.8,427.5 517.9,435.6" stroke="#edf2f8"/>
<path d="M521.9,421.4 530.0,417.3 540.2,419.4 548.3,429.5" stroke="#edf2f8"/>
<path d="M519.9,415.3 530.0,413.3 534.1,409.2 544.2,415.3" stroke="#edf2f8"/>
<path d="M405.6,548.9 406.8,539.0 411.8,536.5 424.1,536.5 434.0,530.3 446.4,529.1" stroke="#edf2f8"/>
<path d="M650.9,528.4 658.2,523.5 665.5,521.1 667.9,515.0" stroke="#edf2f8"/>
<path d="M650.9,528.4 649.6,536.9 655.7,547.9 656.9,557.6 654.5,567.3" stroke="#edf2f8"/>
<path d="M665.5,521.1 670.3,528.4 680.0,532.0 683.7,540.6 682.5,550.3" stroke="#edf2f8"/>
<path d="M667.9,515.0 675.2,511.4 681.3,518.7 689.8,526.0 694.6,534.5 699.5,543.0 697.1,550.3" stroke="#edf2f8"/>
<path d="M660.6,581.9 667.9,586.8" stroke="#edf2f8"/>
<path d="M780.9,429.4 788.7,426.8" stroke="#edf2f8"/>
<path d="M325.9,515.0 325.9,523.5 319.8,524.7" stroke="#edf2f8"/>
<path d="M256.5,470.0 256.5,491.9 259.0,501.6 267.5,507.7" stroke="#edf2f8"/>
<path d="M384.3,533.3 383.0,540.6 378.2,543.0 375.7,552.7 370.9,562.5 366.0,568.5" stroke="#edf2f8"/>
<path d="M378.2,543.0 385.5,547.9 395.2,552.7 404.9,560.0" stroke="#edf2f8"/>
<path d="M370.9,591.7 383.0,599.0 395.2,597.7 397.6,602.6" stroke="#edf2f8"/>
<path d="M369.7,591.7 370.9,599.0 367.2,606.3 366.0,618.4 385.5,628.2 391.6,633.0" stroke="#edf2f8"/>
<path d="M346.5,619.6 366.0,618.4" stroke="#edf2f8"/>
<path d="M345.3,620.9 351.4,619.6 352.6,628.2 350.2,637.9 345.3,637.9" stroke="#edf2f8"/>
<path d="M282.1,581.9 278.4,586.8 279.6,594.1 285.7,601.4 288.2,605.0 256.5,605.0" stroke="#edf2f8"/>
<path d="M288.2,605.0 290.6,599.0 295.5,599.0" stroke="#edf2f8"/>
<path d="M256.5,622.1 266.3,620.9 273.6,611.1 276.0,616.0 278.4,625.7 276.0,635.5" stroke="#edf2f8"/>
<path d="M367.8,667.3 370.6,667.3 381.8,665.4 393.9,662.6" stroke="#edf2f8"/>
<path d="M348.2,652.4 361.2,658.0 366.8,659.8 367.8,667.3 368.7,678.5 373.4,686.0 370.6,691.6 366.8,686.0 367.8,674.8 363.1,667.3 362.2,658.0" stroke="#edf2f8"/>
<path d="M349.1,683.2 361.2,678.5 367.8,667.3" stroke="#edf2f8"/>
<path d="M351.9,717.7 355.7,723.3 356.6,734.5" stroke="#edf2f8"/>
<path d="M154.3,487.0 161.6,494.3 160.4,510.1 155.5,516.2 138.5,517.4" stroke="#ccd0d5"/>
<path d="M175.0,485.8 175.0,494.3 161.6,494.3" stroke="#ccd0d5"/>
<path d="M175.0,488.2 187.2,499.2 189.6,543.0 161.6,545.4 159.2,553.9 153.1,555.2" stroke="#ccd0d5"/>
<path d="M232.2,529.6 231.0,543.0 215.2,549.1 210.3,550.3 203.0,552.7 195.7,553.9 189.6,564.9 178.7,567.3" stroke="#ccd0d5"/>
<path d="M280.9,510.1 283.3,528.4 276.0,547.9 277.2,555.2 266.3,555.2 251.7,556.4 237.1,552.7 229.8,558.8 226.1,562.5 227.3,586.8" stroke="#ccd0d5"/>
<path d="M215.2,549.1 223.7,560.0 229.8,558.8" stroke="#ccd0d5"/>
<path d="M189.6,564.9 203.0,567.3 215.2,564.9 226.1,562.5" stroke="#ccd0d5"/>
<path d="M138.5,540.6 153.1,539.3 159.2,543.0 161.6,553.9" stroke="#ccd0d5"/>
<path d="M140.9,563.7 147.0,560.0 159.2,553.9 176.2,558.8 178.7,567.3 181.1,591.7" stroke="#ccd0d5"/>
<path d="M176.2,558.8 189.6,564.9" stroke="#ccd0d5"/>
<path d="M217.6,572.2 224.9,567.3 226.1,562.5" stroke="#ccd0d5"/>
<path d="M266.1,692.5 296.0,694.4 322.1,694.4" stroke="#ccd0d5"/>
<path d="M307.2,697.2 307.2,715.8 303.4,715.8 303.4,730.7" stroke="#ccd0d5"/>
<path d="M327.7,695.3 337.0,710.2 344.5,715.8 351.9,717.7" stroke="#ccd0d5"/>
<path d="M269.8,641.2 286.6,640.3 291.3,650.5 301.6,645.9 310.9,647.7 311.8,665.4 321.1,665.4 320.2,673.8" stroke="#ccd0d5"/>
</g><g fill="#eef2f9">
<path d="M350.0,175.0 359.7,176.2 362.2,182.3 371.9,181.1 386.5,189.6 397.4,200.6 399.9,207.9 395.0,215.2 381.6,217.6 367.0,212.7 357.3,206.6 368.2,221.2 369.5,232.2 376.8,239.5 382.8,239.5 381.6,232.2 393.8,233.4 390.1,224.9 402.3,213.9 409.6,216.4 410.8,207.9 408.4,198.1 410.8,189.6 419.3,190.8 421.8,196.9 415.7,200.6 418.1,207.9 425.4,207.9 430.3,200.6 440.0,193.3 447.3,189.6 453.4,188.4 457.1,193.3 469.2,188.4 481.4,186.0 485.0,178.7 482.6,173.8 488.7,173.8 500.9,178.7 510.6,182.3 519.1,192.0 521.5,186.0 517.9,177.4 513.0,173.8 511.8,159.2 517.9,149.5 521.5,131.9 521.5,120.3 348.8,120.3 348.8,166.5Z"/>
<path d="M537.3,120.3 537.3,131.9 534.9,151.9 542.2,166.5 541.0,181.1 544.6,190.8 538.6,203.0 531.3,210.3 521.5,209.1 530.0,215.2 537.3,213.9 544.6,203.0 548.3,190.8 547.1,184.7 553.2,182.3 558.0,188.4 559.2,199.3 565.3,200.6 561.7,189.6 556.8,182.3 549.5,179.9 544.6,178.7 545.9,166.5 544.6,154.3 545.9,144.6 550.7,151.9 562.9,158.0 564.1,153.1 556.8,148.2 555.6,142.2 561.7,138.5 569.0,136.1 577.5,142.2 583.6,147.0 581.1,154.3 587.2,162.8 587.2,147.0 579.9,137.3 575.1,131.9 575.1,120.3Z"/>
<path d="M788.4,120.3 788.4,131.9 787.2,144.6 799.4,160.4 806.7,147.0 810.3,151.9 829.8,150.7 838.3,149.5 837.1,139.7 844.4,131.9 859.0,133.6 873.6,137.3 883.3,147.0 893.0,159.2 907.6,156.8 922.2,159.2 929.5,166.5 928.3,175.0 934.4,179.9 946.6,177.4 946.6,120.3Z"/>
<path d="M245.9,293.6 262.0,295.7 261.5,301.9 260.6,306.0 263.3,307.6 260.2,311.6 258.4,314.8 257.5,318.7 259.3,321.8 263.3,325.6 266.0,325.6 269.6,323.3 274.5,321.0 278.0,326.3 286.1,323.3 292.8,319.4 297.2,319.4 299.0,322.9 302.1,322.1 303.9,318.7 308.4,315.5 308.8,310.0 308.4,303.5 311.0,297.8 315.5,296.1 318.2,301.9 321.7,301.1 323.5,295.2 323.1,291.0 319.5,288.5 319.1,283.3 325.3,280.6 332.9,279.8 339.6,280.6 346.3,277.1 349.4,276.6 344.0,274.4 341.8,270.8 335.1,271.7 326.2,274.4 317.3,277.5 312.8,273.5 309.7,267.1 310.1,257.7 308.8,252.0 312.8,245.1 317.3,239.1 324.0,229.8 328.0,226.6 327.1,221.2 322.2,219.1 313.7,221.2 310.6,227.6 308.4,232.9 306.1,240.1 299.4,246.1 295.0,252.0 292.3,254.9 291.9,262.5 291.4,269.9 295.0,271.7 298.5,276.2 299.0,280.6 295.4,282.4 292.8,287.6 289.2,289.3 289.2,295.2 287.8,301.9 286.1,308.4 284.3,308.8 280.3,309.2 278.0,313.2 278.0,314.8 272.7,314.8 271.3,310.0 270.9,307.6 272.2,304.3 268.2,297.8 267.8,296.1 265.1,290.2 264.2,285.0 262.4,281.5 262.0,277.1 261.1,281.5 258.4,285.0 254.8,289.3 250.4,292.7Z"/>
<path d="M339.6,264.8 343.1,265.7 348.1,263.9 346.7,260.6 347.6,257.7 344.0,259.2 340.9,257.7 341.8,261.5Z"/>
<path d="M189.5,441.2 198.7,437.6 205.8,435.6 211.8,429.5 212.9,421.4 216.9,415.3 225.0,410.2 226.6,406.2 227.0,401.1 233.1,398.1 239.2,398.1 245.3,396.0 251.4,395.0 257.5,395.0 262.5,399.1 267.6,405.2 273.7,411.2 279.8,417.3 283.8,421.4 282.8,427.5 285.8,432.5 289.9,429.5 287.9,425.4 289.9,421.4 292.9,422.4 296.0,419.4 291.9,415.3 285.8,411.2 279.8,405.2 271.7,396.0 268.6,390.0 271.7,386.9 274.7,381.8 276.7,386.9 283.8,397.0 291.9,403.1 300.0,409.2 301.1,415.3 304.1,419.4 305.1,421.4 309.2,427.5 311.2,433.5 315.2,438.6 320.3,435.6 316.3,430.5 319.3,427.5 315.2,421.4 316.3,417.3 322.3,416.3 328.4,412.3 329.2,412.2 331.8,412.2 335.0,413.5 333.1,415.5 335.0,418.1 331.8,420.7 333.1,425.3 335.0,430.5 338.3,434.4 341.5,437.0 344.8,439.6 348.7,440.3 352.6,437.7 357.9,437.0 361.8,439.6 365.7,440.9 368.3,439.0 373.5,437.7 374.8,439.0 376.1,440.9 375.5,446.1 374.2,451.4 373.5,456.6 372.2,461.8 371.6,464.4 367.7,466.1 358.8,466.1 353.0,464.5 348.1,466.6 336.0,465.6 327.1,464.5 321.7,461.9 317.7,459.3 311.5,457.7 304.1,461.9 303.9,467.7 300.3,471.3 295.0,469.8 288.7,466.6 282.9,463.0 282.0,460.3 273.6,457.7 266.0,456.1 264.2,453.9 259.7,452.3 262.9,448.0 264.2,444.7 262.0,442.0 262.0,438.6 264.0,435.0 260.6,435.8 258.6,433.6 253.1,435.6 249.5,435.8 242.8,435.0 237.4,436.7 228.3,436.4 220.5,438.1 215.1,442.0 211.8,442.5 205.8,445.8 201.5,444.7 196.9,445.3 191.1,443.1 190.8,441.4Z"/>
<path d="M337.6,407.0 337.0,404.4 340.2,397.8 342.2,392.6 346.1,384.8 350.0,380.9 353.9,378.9 356.6,379.6 359.2,381.5 362.4,382.8 368.3,382.4 373.5,379.6 381.4,376.3 387.2,375.0 386.6,377.6 383.3,381.5 380.7,386.1 381.4,389.4 387.9,393.9 393.1,399.2 398.3,404.4 400.3,408.9 399.6,411.5 394.4,412.2 387.9,413.5 381.4,411.5 373.5,408.9 368.3,407.6 363.1,408.3 357.9,410.2 352.6,411.5 347.4,412.9 342.2,410.9 339.6,408.3Z"/>
<path d="M423.6,386.9 430.7,380.8 437.8,377.8 444.9,375.8 451.0,378.8 450.0,384.9 457.0,385.9 453.0,388.9 442.9,390.0 440.8,397.0 446.9,405.2 450.0,413.3 451.0,421.4 455.0,429.5 454.0,437.6 442.9,438.6 433.7,433.5 431.7,425.4 434.7,417.3 430.7,409.2 427.6,401.1 425.6,393.0Z"/>
<path d="M425.4,473.4 429.1,472.2 432.8,474.6 439.0,483.3 446.4,490.7 456.3,493.2 463.7,489.5 467.4,488.3 466.2,489.5 463.7,493.2 461.3,501.9 453.8,505.6 446.4,504.3 443.9,500.6 442.7,499.4 441.5,493.2 437.7,489.5 432.8,480.8 427.8,474.6Z"/>
<path d="M358.3,474.6 362.3,479.6 366.7,486.3 371.4,502.1 379.1,514.5 381.6,528.1 387.0,537.0 394.9,545.9 402.9,553.8 408.1,561.3 410.5,568.7 408.1,556.3 407.3,555.1 402.9,537.0 394.9,524.6 387.0,510.0 378.1,497.7 370.2,485.3 368.5,479.6 367.2,477.1 366.5,480.8 367.5,485.3 365.7,485.8 361.8,479.1 359.8,475.1Z"/>
</g><g fill="none" stroke="#cfd2d6" stroke-width="1.2" stroke-linejoin="round" clip-path="url(#landclip)">
<path d="M350.0,175.0 359.7,176.2 362.2,182.3 371.9,181.1 386.5,189.6 397.4,200.6 399.9,207.9 395.0,215.2 381.6,217.6 367.0,212.7 357.3,206.6 368.2,221.2 369.5,232.2 376.8,239.5 382.8,239.5 381.6,232.2 393.8,233.4 390.1,224.9 402.3,213.9 409.6,216.4 410.8,207.9 408.4,198.1 410.8,189.6 419.3,190.8 421.8,196.9 415.7,200.6 418.1,207.9 425.4,207.9 430.3,200.6 440.0,193.3 447.3,189.6 453.4,188.4 457.1,193.3 469.2,188.4 481.4,186.0 485.0,178.7 482.6,173.8 488.7,173.8 500.9,178.7 510.6,182.3 519.1,192.0 521.5,186.0 517.9,177.4 513.0,173.8 511.8,159.2 517.9,149.5 521.5,131.9 521.5,120.3 348.8,120.3 348.8,166.5Z"/>
<path d="M537.3,120.3 537.3,131.9 534.9,151.9 542.2,166.5 541.0,181.1 544.6,190.8 538.6,203.0 531.3,210.3 521.5,209.1 530.0,215.2 537.3,213.9 544.6,203.0 548.3,190.8 547.1,184.7 553.2,182.3 558.0,188.4 559.2,199.3 565.3,200.6 561.7,189.6 556.8,182.3 549.5,179.9 544.6,178.7 545.9,166.5 544.6,154.3 545.9,144.6 550.7,151.9 562.9,158.0 564.1,153.1 556.8,148.2 555.6,142.2 561.7,138.5 569.0,136.1 577.5,142.2 583.6,147.0 581.1,154.3 587.2,162.8 587.2,147.0 579.9,137.3 575.1,131.9 575.1,120.3Z"/>
<path d="M788.4,120.3 788.4,131.9 787.2,144.6 799.4,160.4 806.7,147.0 810.3,151.9 829.8,150.7 838.3,149.5 837.1,139.7 844.4,131.9 859.0,133.6 873.6,137.3 883.3,147.0 893.0,159.2 907.6,156.8 922.2,159.2 929.5,166.5 928.3,175.0 934.4,179.9 946.6,177.4 946.6,120.3Z"/>
<path d="M245.9,293.6 262.0,295.7 261.5,301.9 260.6,306.0 263.3,307.6 260.2,311.6 258.4,314.8 257.5,318.7 259.3,321.8 263.3,325.6 266.0,325.6 269.6,323.3 274.5,321.0 278.0,326.3 286.1,323.3 292.8,319.4 297.2,319.4 299.0,322.9 302.1,322.1 303.9,318.7 308.4,315.5 308.8,310.0 308.4,303.5 311.0,297.8 315.5,296.1 318.2,301.9 321.7,301.1 323.5,295.2 323.1,291.0 319.5,288.5 319.1,283.3 325.3,280.6 332.9,279.8 339.6,280.6 346.3,277.1 349.4,276.6 344.0,274.4 341.8,270.8 335.1,271.7 326.2,274.4 317.3,277.5 312.8,273.5 309.7,267.1 310.1,257.7 308.8,252.0 312.8,245.1 317.3,239.1 324.0,229.8 328.0,226.6 327.1,221.2 322.2,219.1 313.7,221.2 310.6,227.6 308.4,232.9 306.1,240.1 299.4,246.1 295.0,252.0 292.3,254.9 291.9,262.5 291.4,269.9 295.0,271.7 298.5,276.2 299.0,280.6 295.4,282.4 292.8,287.6 289.2,289.3 289.2,295.2 287.8,301.9 286.1,308.4 284.3,308.8 280.3,309.2 278.0,313.2 278.0,314.8 272.7,314.8 271.3,310.0 270.9,307.6 272.2,304.3 268.2,297.8 267.8,296.1 265.1,290.2 264.2,285.0 262.4,281.5 262.0,277.1 261.1,281.5 258.4,285.0 254.8,289.3 250.4,292.7Z"/>
<path d="M339.6,264.8 343.1,265.7 348.1,263.9 346.7,260.6 347.6,257.7 344.0,259.2 340.9,257.7 341.8,261.5Z"/>
<path d="M189.5,441.2 198.7,437.6 205.8,435.6 211.8,429.5 212.9,421.4 216.9,415.3 225.0,410.2 226.6,406.2 227.0,401.1 233.1,398.1 239.2,398.1 245.3,396.0 251.4,395.0 257.5,395.0 262.5,399.1 267.6,405.2 273.7,411.2 279.8,417.3 283.8,421.4 282.8,427.5 285.8,432.5 289.9,429.5 287.9,425.4 289.9,421.4 292.9,422.4 296.0,419.4 291.9,415.3 285.8,411.2 279.8,405.2 271.7,396.0 268.6,390.0 271.7,386.9 274.7,381.8 276.7,386.9 283.8,397.0 291.9,403.1 300.0,409.2 301.1,415.3 304.1,419.4 305.1,421.4 309.2,427.5 311.2,433.5 315.2,438.6 320.3,435.6 316.3,430.5 319.3,427.5 315.2,421.4 316.3,417.3 322.3,416.3 328.4,412.3 329.2,412.2 331.8,412.2 335.0,413.5 333.1,415.5 335.0,418.1 331.8,420.7 333.1,425.3 335.0,430.5 338.3,434.4 341.5,437.0 344.8,439.6 348.7,440.3 352.6,437.7 357.9,437.0 361.8,439.6 365.7,440.9 368.3,439.0 373.5,437.7 374.8,439.0 376.1,440.9 375.5,446.1 374.2,451.4 373.5,456.6 372.2,461.8 371.6,464.4 367.7,466.1 358.8,466.1 353.0,464.5 348.1,466.6 336.0,465.6 327.1,464.5 321.7,461.9 317.7,459.3 311.5,457.7 304.1,461.9 303.9,467.7 300.3,471.3 295.0,469.8 288.7,466.6 282.9,463.0 282.0,460.3 273.6,457.7 266.0,456.1 264.2,453.9 259.7,452.3 262.9,448.0 264.2,444.7 262.0,442.0 262.0,438.6 264.0,435.0 260.6,435.8 258.6,433.6 253.1,435.6 249.5,435.8 242.8,435.0 237.4,436.7 228.3,436.4 220.5,438.1 215.1,442.0 211.8,442.5 205.8,445.8 201.5,444.7 196.9,445.3 191.1,443.1 190.8,441.4Z"/>
<path d="M337.6,407.0 337.0,404.4 340.2,397.8 342.2,392.6 346.1,384.8 350.0,380.9 353.9,378.9 356.6,379.6 359.2,381.5 362.4,382.8 368.3,382.4 373.5,379.6 381.4,376.3 387.2,375.0 386.6,377.6 383.3,381.5 380.7,386.1 381.4,389.4 387.9,393.9 393.1,399.2 398.3,404.4 400.3,408.9 399.6,411.5 394.4,412.2 387.9,413.5 381.4,411.5 373.5,408.9 368.3,407.6 363.1,408.3 357.9,410.2 352.6,411.5 347.4,412.9 342.2,410.9 339.6,408.3Z"/>
<path d="M423.6,386.9 430.7,380.8 437.8,377.8 444.9,375.8 451.0,378.8 450.0,384.9 457.0,385.9 453.0,388.9 442.9,390.0 440.8,397.0 446.9,405.2 450.0,413.3 451.0,421.4 455.0,429.5 454.0,437.6 442.9,438.6 433.7,433.5 431.7,425.4 434.7,417.3 430.7,409.2 427.6,401.1 425.6,393.0Z"/>
<path d="M425.4,473.4 429.1,472.2 432.8,474.6 439.0,483.3 446.4,490.7 456.3,493.2 463.7,489.5 467.4,488.3 466.2,489.5 463.7,493.2 461.3,501.9 453.8,505.6 446.4,504.3 443.9,500.6 442.7,499.4 441.5,493.2 437.7,489.5 432.8,480.8 427.8,474.6Z"/>
<path d="M358.3,474.6 362.3,479.6 366.7,486.3 371.4,502.1 379.1,514.5 381.6,528.1 387.0,537.0 394.9,545.9 402.9,553.8 408.1,561.3 410.5,568.7 408.1,556.3 407.3,555.1 402.9,537.0 394.9,524.6 387.0,510.0 378.1,497.7 370.2,485.3 368.5,479.6 367.2,477.1 366.5,480.8 367.5,485.3 365.7,485.8 361.8,479.1 359.8,475.1Z"/>
</g><g stroke="#cfd2d6" stroke-width=".7">
<path d="M362.4,386.1 363.1,383.5 365.7,383.2 368.3,382.4 369.9,384.1 371.6,388.1 374.8,387.7 375.5,389.0 370.9,389.8 368.3,389.4 365.0,392.0 363.1,390.0Z" fill="#7ba4c9"/>
<path d="M269.6,431.5 277.7,430.5 282.8,430.5 279.8,437.6 271.7,434.6Z" fill="#7cc898"/>
<path d="M251.4,414.3 255.4,412.3 256.9,419.4 254.4,425.4 251.4,424.4Z" fill="#7cc898"/>
<path d="M252.0,406.2 255.4,405.2 255.8,410.2 253.0,410.8Z" fill="#79abb9"/>
<path d="M319.5,443.1 322.6,442.8 329.8,444.4 332.0,445.0 331.6,446.1 325.3,446.6 320.0,445.0Z" fill="#cfe0e6"/>
<path d="M358.8,446.1 361.9,444.4 368.8,442.5 366.3,446.3 361.9,448.5 359.2,447.7Z" fill="#7ba4c9"/>
<path d="M225.4,420.5 228.5,418.4 230.1,419.9 228.5,422.2Z" fill="#c6d0dc"/>
<path d="M447.3,127.6 443.7,142.2 444.9,149.5 452.2,156.8 459.5,161.6 469.2,161.6 466.8,154.3 461.9,144.6 461.9,127.6Z" fill="#79adb9"/>
<path d="M430.3,178.7 435.2,177.4 437.6,182.3 433.9,186.4 429.1,184.7Z" fill="#79adb9"/>
<path d="M264.7,312.4 267.3,310.0 270.9,309.6 270.9,313.2 269.1,316.3 268.2,318.3 264.7,316.3 264.2,314.0Z" fill="#a9c1dc"/>
<path d="M258.4,314.0 261.5,313.2 262.9,315.5 262.4,317.5 259.7,317.5 258.4,315.9Z" fill="#a9c1dc"/>
<path d="M263.8,319.1 267.8,318.3 268.2,321.0 265.5,321.0 263.8,319.8Z" fill="#a9c1dc"/>
<path d="M295.4,299.4 298.5,294.4 299.4,295.2 298.1,300.2 296.3,302.3Z" fill="#a9c1dc"/>
<path d="M312.4,291.0 316.8,288.5 318.2,289.7 315.5,291.9 312.8,293.6Z" fill="#a9c1dc"/>
<path d="M314.6,285.9 317.3,285.0 316.8,286.7Z" fill="#a9c1dc"/>
<path d="M327.5,435.3 328.9,434.4 328.4,435.6Z" fill="#d5dde6"/>
<path d="M323.1,431.9 324.0,431.4 323.7,432.5Z" fill="#d5dde6"/>
<path d="M330.7,428.5 331.6,426.5 331.1,428.2Z" fill="#d5dde6"/>
<path d="M332.0,423.9 333.3,422.2 332.9,423.6Z" fill="#d5dde6"/>
<path d="M339.1,440.3 340.5,438.4 340.0,440.9Z" fill="#d5dde6"/>
<path d="M326.6,430.2 327.5,429.7 327.1,430.5Z" fill="#d5dde6"/>
<path d="M319.5,427.9 322.6,425.7 324.4,429.1 321.7,429.7Z" fill="#d5dde6"/>
<path d="M334.2,431.4 335.1,430.8 334.7,431.6Z" fill="#d5dde6"/>
<path d="M325.8,433.0 326.6,432.5 326.2,433.6Z" fill="#d5dde6"/>
<path d="M327.5,438.6 328.4,438.1 328.2,438.9Z" fill="#d5dde6"/>
<path d="M335.6,435.8 336.5,435.6 336.0,436.4Z" fill="#d5dde6"/>
<path d="M327.1,418.1 328.4,417.0 328.0,418.4Z" fill="#d5dde6"/>
<path d="M324.0,414.6 325.3,413.7 324.9,414.6Z" fill="#d5dde6"/>
</g>
<g font-family="Liberation Sans, sans-serif" font-size="11.3" fill="#483e8c" text-anchor="middle" stroke="#483e8c" stroke-width=".22">
<text transform="translate(129 234) scale(.85 1)">30.88K</text>
<text transform="translate(249 277) scale(.85 1)">2.33</text>
<text transform="translate(179 338) scale(.85 1)">661.27</text>
<text transform="translate(233 357) scale(.85 1)">55.14</text>
<text transform="translate(299 347) scale(.85 1)">3.47K</text>
<text transform="translate(279 377) scale(.85 1)">59.16K</text>
<text transform="translate(224 386) scale(.85 1)">187.17K</text>
<text transform="translate(325 388) scale(.85 1)">36.84K</text>
<text transform="translate(304 417) scale(.85 1)">203.21K</text>
<text transform="translate(371 430) scale(.85 1)">886.45K</text>
<text transform="translate(177 428) scale(.85 1)">79.13K</text>
<text transform="translate(363 451) scale(.85 1)">22.62K</text>
<text transform="translate(415 423) scale(.85 1)">34.21K</text>
<text transform="translate(480 430) scale(.85 1)">22.09K</text>
<text transform="translate(513 374) scale(.85 1)">17.78K</text>
<text transform="translate(548 417) scale(.85 1)">28.38K</text>
<text transform="translate(677 382) scale(.85 1)">10.72K</text>
<text transform="translate(684 268) scale(.85 1)">214.32K</text>
<text transform="translate(679 447) scale(.85 1)">1.02M</text>
<text transform="translate(784 422) scale(.85 1)">14.53K</text>
<text transform="translate(784 447) scale(.85 1)">29.37K</text>
<text transform="translate(832 445) scale(.85 1)">722.68K</text>
<text transform="translate(517 458) scale(.85 1)">129.61K</text>
<text transform="translate(525 476) scale(.85 1)">182.75K</text>
<text transform="translate(408 462) scale(.85 1)">53.99K</text>
<text transform="translate(454 466) scale(.85 1)">956.10K</text>
<text transform="translate(369 473) scale(.85 1)">71.44K</text>
<text transform="translate(351 495) scale(.85 1)">54.33K</text>
<text transform="translate(415 509) scale(.85 1)">352.19</text>
<text transform="translate(256 458) scale(.85 1)">23.31K</text>
<text transform="translate(182 469) scale(.85 1)">22.61K</text>
<text transform="translate(221 489) scale(.85 1)">160.25K</text>
<text transform="translate(290 497) scale(.85 1)">2.04K</text>
<text transform="translate(567 525) scale(.85 1)">327.02K</text>
<text transform="translate(618 491) scale(.85 1)">15.70K</text>
<text transform="translate(617 510) scale(.85 1)">74.85K</text>
<text transform="translate(671 528) scale(.85 1)">205.08</text>
<text transform="translate(665 547) scale(.85 1)">6.82K</text>
<text transform="translate(697 555) scale(.85 1)">312.57</text>
<text transform="translate(754 510) scale(.85 1)">123.14K</text>
<text transform="translate(758 561) scale(.85 1)">562.52K</text>
<text transform="translate(575 584) scale(.85 1)">1.59K</text>
<text transform="translate(815 585) scale(.85 1)">1.40K</text>
<text transform="translate(670 600) scale(.85 1)">1.11K</text>
<text transform="translate(723 623) scale(.85 1)">830.27K</text>
<text transform="translate(857 648) scale(.85 1)">145.02K</text>
<text transform="translate(929.5 662) scale(.85 1)">20.74K</text>
<text transform="translate(811 736) scale(.85 1)">46.10K</text>
<text transform="translate(349 561) scale(.85 1)">4.72K</text>
<text transform="translate(404 566) scale(.85 1)">4.35K</text>
<text transform="translate(161 581) scale(.85 1)">8.71K</text>
<text transform="translate(209 584) scale(.85 1)">8.01K</text>
<text transform="translate(269 586) scale(.85 1)">4.87K</text>
<text transform="translate(308 589) scale(.85 1)">15.00K</text>
<text transform="translate(358 613) scale(.85 1)">3.60K</text>
<text transform="translate(281 622) scale(.85 1)">11.49K</text>
<text transform="translate(348 635) scale(.85 1)">1.51K</text>
<text transform="translate(367 679) scale(.85 1)">7.92K</text>
<text transform="translate(372 704) scale(.85 1)">5.79K</text>
<text transform="translate(423 704) scale(.85 1)">353.89</text>
<text transform="translate(316 763) scale(.85 1)">54.84K</text>
</g>
</svg>

  <!-- map tools -->
  <div class="abs" style="left:13px;top:29px;width:29px;height:58px;background:#fff;border-radius:5px;box-shadow:0 1px 2px rgba(0,0,0,.28)">
    <div class="abs" style="left:0;top:29px;width:29px;height:1px;background:#d6d6d6"></div>
    <svg class="abs" style="left:5px;top:5px" width="20" height="20" viewBox="0 0 20 20"><path d="M1.5 1.5h16.5M1.5 1.5v16" stroke="#70808c" stroke-width="1.1" stroke-dasharray="1 2.3" fill="none"/><path d="M7.5 7.5l9.4 3.3-4 1.8 3.3 3.6-1.7 1.4-3.2-3.7-1.9 3.6z" fill="#fff" stroke="#70808c" stroke-width="1"/></svg>
    <svg class="abs" style="left:5px;top:34px" width="20" height="20" viewBox="0 0 20 20"><path d="M1.5 1.5h16.5M1.5 1.5v16" stroke="#70808c" stroke-width="1.1" stroke-dasharray="1 2.3" fill="none"/><circle cx="10.7" cy="10.5" r="5" fill="none" stroke="#70808c" stroke-width="1.1"/><path d="M14.3 14.2l3.6 3.7" stroke="#70808c" stroke-width="1.2"/></svg>
  </div>
  <!-- scale -->
  <div class="abs" style="left:12.5px;top:620px;width:96px;height:33px;background:rgba(255,255,255,.78);border:2px solid #2b2b2b;border-top:none;font-family:'Liberation Sans',sans-serif;font-size:9.8px;color:#333;"><span class="abs" style="left:4px;top:15.5px;white-space:nowrap">2,000 km</span></div>
  <!-- info -->
  <svg class="abs" style="left:842px;top:639px" width="26" height="26" viewBox="0 0 26 26"><circle cx="13" cy="12.2" r="12" fill="#fff"/><circle cx="13" cy="12.2" r="7" fill="#000"/><rect x="12" y="10.8" width="2" height="5" fill="#fff"/><circle cx="13" cy="8.6" r="1.2" fill="#fff"/></svg>
  <!-- tooltip -->
  <div class="abs" style="left:215.5px;top:164.5px;width:123px;height:45px;background:rgba(56,61,61,.97);border-radius:3.5px;color:#fff;font-size:9.6px;">
    <span class="abs" style="left:6.5px;top:9px;font-weight:bold;letter-spacing:-.35px">NORWAY</span>
    <div class="abs" style="left:6.5px;top:22.5px;width:66px;height:1px;background:#fff"></div>
    <span class="abs" style="left:6.5px;top:27px;letter-spacing:-.35px">Sales: <b>2,334.93</b></span>
  </div>
  <!-- hand cursor -->
  <svg class="abs" style="left:194px;top:153px" width="20" height="24" viewBox="0 0 20 24"><path d="M6.2 2.2c0-1 .7-1.6 1.5-1.6s1.5.6 1.5 1.6v7l.4-2c.2-.8.8-1.2 1.5-1.1.7.1 1.1.7 1.1 1.5l.3 1c.3-.7.9-1 1.500-.8.7.2 1 .8 1 1.500l.3.800c.3-.5.8-.7 1.400-.5.6.2.9.8.9 1.500v4.600c0 3.300-1.800 5.900-5.600 5.900h-1.600c-2.400 0-3.800-1-5.100-3l-3.900-5.800c-.5-.8-.3-1.600.3-2 .7-.4 1.500-.2 2 .5l2.100 2.800z" fill="#fff" stroke="#111" stroke-width="1.1" stroke-linejoin="round"/></svg>
  <div id="legsep"></div>
  <div id="legend">
    <div class="abs sx" style="left:7px;top:6px;font-weight:bold;font-size:12.4px;color:#3c4a6c;transform:scaleX(.875)">Sales</div>
    <div class="abs" style="left:7px;top:31px;width:166px;height:10px;background:linear-gradient(90deg,#7aa2c8 0%,#7bb2b0 45%,#7cc796 72%,#7fd985 100%)"></div>
    <div class="abs" style="left:7px;top:41px;width:1px;height:4px;background:#c4c4c4"></div>
    <div class="abs" style="left:172px;top:41px;width:1px;height:4px;background:#c4c4c4"></div>
    <div class="abs sx" style="left:7px;top:47px;font-size:11.9px;color:#3f4a66;transform:scaleX(.935)">55.14</div>
    <div class="abs sx" style="left:113px;top:47px;width:60px;text-align:right;font-size:11.9px;color:#3f4a66;transform:scaleX(.95);transform-origin:100% 50%">1.02M</div>
  </div>
</div>
<div id="rline"></div>
<div id="bline"></div>
<div id="btool"><svg class="abs" style="left:0;top:0" width="480" height="56" viewBox="59 793 480 56">
<!-- bulb -->
<g fill="none" stroke="#e2e2e2" stroke-width="1.100" stroke-linecap="round">
<path d="M76.300 827.500c0-2.500-3.300-4.300-3.300-8.300a7.300 7.300 0 0 1 14.600 0c0 4-3.300 5.800-3.300 8.300z"/>
<path d="M76.800 829.700h7M77.300 831.900h6M80.300 809.400v2.300M70.200 813.400l1.700 1.500M90.400 813.400l-1.700 1.500M68.800 819.600h2.200M89.600 819.600h2.200"/></g>
<rect x="102" y="799" width="1.100" height="44.500" fill="#1f1f1f"/>
<!-- matrix grid -->
<g fill="#e9b76b"><rect x="119.800" y="810" width="3.300" height="3.200"/><rect x="125" y="810" width="18.200" height="3.200"/><rect x="119.800" y="815" width="3.300" height="17.700"/></g>
<g fill="#5f9ccb"><g id="bg1"><rect x="125" y="815" width="3.300" height="3.100"/><rect x="130" y="815" width="3.300" height="3.100"/><rect x="135" y="815" width="3.300" height="3.100"/><rect x="139.900" y="815" width="3.300" height="3.100"/></g><use href="#bg1" y="4.900"/><use href="#bg1" y="9.800"/><use href="#bg1" y="14.600"/></g>
<!-- columns grid -->
<g fill="#e9b76b"><rect x="166" y="810" width="3" height="3.200"/><rect x="171.100" y="810" width="3" height="3.200"/><rect x="176.200" y="810" width="3" height="3.200"/><rect x="181.200" y="810" width="3" height="3.200"/><rect x="186.300" y="810" width="3" height="3.200"/></g>
<g fill="#5f9ccb"><rect x="166" y="815" width="3" height="17.700"/><rect x="171.100" y="815" width="3" height="17.700"/><rect x="176.200" y="815" width="3" height="17.700"/><rect x="181.200" y="815" width="3" height="17.700"/><rect x="186.300" y="815" width="3" height="17.700"/></g>
<!-- line arrows -->
<g fill="none" stroke-width="1.100">
<path d="M211.800 824.200l5.400 5 17-19" stroke="#e26a4b"/><path d="M229.800 810.300l4.600-.4-.3 4.600" stroke="#e26a4b"/>
<path d="M212 832l6.600-13 8.200 10.700 7.300-8.600" stroke="#5f9ccb"/><path d="M229.800 821l4.600-.4-.3 4.600" stroke="#5f9ccb"/>
<path d="M257.600 823.500c1 9 8 6 12-1s6-10 11.200-13" stroke="#e26a4b"/><path d="M276.200 809.600l4.800-.4-.3 4.700" stroke="#e26a4b"/>
<path d="M258 832c1-9 3-16 6.500-16s5 13.500 9.500 13.500c3 0 4.500-3.500 6.500-8" stroke="#5f9ccb"/><path d="M276.200 822l4.600-.8.500 4.600" stroke="#5f9ccb"/>
</g>
<!-- areas -->
<path d="M303 829.800v-8.200l6.600-7.800 7.600 7.900 9.900-7.900v16z" fill="#66a0c8"/>
<path d="M349.100 829.800v-6c1-6 4-10 7.500-10s5 7.600 9.500 7.600c3.500 0 5-4 6.900-7.600v16z" fill="#66a0c8"/>
<!-- globe bubbles -->
<g id="globe7" transform="translate(406.900 821)">
<circle r="11" fill="#8a8a8a"/>
<g fill="none" stroke="#484848" stroke-width="1.300"><ellipse rx="5" ry="11"/><path d="M0-11v22M-10.500-4.200h21M-10.500 4.200h21"/></g>
<circle cx="3.800" cy="0.200" r="3.500" fill="#5b9fd0"/><circle cx="-0.600" cy="4.900" r="3" fill="#5b9fd0"/><circle cx="4.800" cy="5.800" r="2.100" fill="#5b9fd0"/>
</g>
<!-- selected button + globe chorolpleth -->
<rect x="430.600" y="798.500" width="44.800" height="44.800" rx="5" fill="#2e2e2e" stroke="#6e6e6e" stroke-width="1"/>
<g id="globe8" transform="translate(452.800 821)">
<circle r="11" fill="#8a8a8a"/>
<path d="M4.600-10A11 11 0 0 1 10.600-3.200H6.800C6.400-6 5.700-8.300 4.600-10z" fill="#e5603e"/>
<path d="M10.600 3.600A11 11 0 0 1 4.200 10.200C5.500 8.500 6.400 6.200 6.800 3.600z" fill="#5b9fd0"/>
<rect x="-11" y="-3.400" width="5.200" height="6.800" fill="#f0cf8a"/>
<rect x="-5" y="-3.400" width="10.200" height="6.800" fill="#86a843"/>
<g fill="none" stroke="#2e2e2e" stroke-width="1.200"><ellipse rx="5.600" ry="11"/><path d="M0-11v7.500M0 3.500v7.500M-10.500-3.900h21M-10.500 3.900h21M-5.400-3.400v6.800"/></g>
</g>
</svg>
</div>
<div id="bline2"></div>
<div id="tabbar"><!-- green line with notch for active tab -->
<div class="abs" style="left:0;top:0;width:1225px;height:3.5px;background:#3bb52a"></div>
<svg class="abs" style="left:0;top:0" width="1225" height="38" viewBox="0 851.5 1225 38">
<!-- left icons -->
<g stroke="#f0f0f0" stroke-width="1.900"><path d="M13.800 866.800h13.200M13.800 871.200h13.200M13.800 875.600h13.200"/></g>
<g fill="none" stroke="#e0e0e0" stroke-width="1.100"><path d="M47 876.800v-13.300h4.800l1.600 1.900h7.200v3" fill="#e0e0e0" stroke="none"/><path d="M47 876.800v-13.300h4.800l1.600 1.900h7.200v2.500M47 876.800h5"/><circle cx="58" cy="873" r="4.600" fill="#171717"/><path d="M54.800 876.500l-2.800 3"/></g>
<g fill="none" stroke="#e0e0e0" stroke-width="1.100"><path d="M76.800 865h9.500l-3.600 4.300v5.400l-2.300 1v-6.400z"/><path d="M88 864.200h5v11.200h-7.400"/><path d="M84.600 878.400h3.200M89.200 878.400h3.400" stroke-width="1.600"/><path d="M77.500 870v8.500h4.500"/></g>
<!-- active tab -->
<path d="M460.700 851.500v26.500q0 5 5 5h111.600q5 0 5-5v-26.500z" fill="#252525"/>
<path d="M0 853.250h457.200q3.500 0 3.500 3.500v21.250q0 5 5 5h111.600q5 0 5-5v-21.250q0-3.500 3.500-3.500h640" fill="none" stroke="#3bb52a" stroke-width="3.500"/>
<rect x="462.400" y="848" width="118.200" height="7" fill="#252525"/>
<!-- plus -->
<path d="M717.400 864.500v13.400M710.700 871.200h13.400" stroke="#f0f0f0" stroke-width="1.700"/>
<!-- right icons -->
<g fill="none" stroke="#d0d0d0" stroke-width=".9"><path d="M1096.500 863.200v15.700l-8.500-6.500zM1096.500 863.200v15.700l7.500-5.200z"/><path d="M1094.500 866.500l-4.500 4M1094.500 869.500l-3.500 3.200M1094.500 872.500l-2.300 2.100M1098.300 868v8.500M1100.200 870.500v4.800"/></g>
<circle cx="1122.400" cy="869.400" r="7.500" fill="#f0201c"/><path d="M1122.400 865.600v7.600M1118.600 869.400h7.600" stroke="#fff" stroke-width="1.600"/>
<g fill="none" stroke="#e0e0e0" stroke-width="1.100" stroke-linejoin="round"><path d="M1137 863.800l6.200 3.400-.8 1.600 1.200 3.300-3.300-.2-2.600 2.600-1.200-3.600-3.600-1.200 2.600-2.600.1-2.500z"/><path d="M1141.500 873.500l5.500 6"/></g>
<path d="M1156 869.200h6l-3 4.600z" fill="#9cc4ea"/>
<g fill="none" stroke="#d8d8d8" stroke-width="1.200"><path d="M1180.500 871.600a1.500 1.500 0 1 1 1.800 1.700 3.200 3.200 0 0 1-3.800-3.100 5 5 0 0 1 5.600-4.600 6.600 6.600 0 0 1 5.400 7.400 7.500 7.500 0 0 1-8.500 5.900 7.800 7.800 0 0 1-6-5 8.500 8.500 0 0 1 6.500-11"/></g>
<g fill="none" stroke="#d8d8d8" stroke-width="1.100"><path d="M1208.200 864.300a7 7 0 0 1 0 14" /><path d="M1208.200 878.300a7 7 0 0 1 0-14" stroke-dasharray="1.400 2.200"/><path d="M1206 861.700h4.500M1208.200 861.700v2.500M1213.400 864.500l1.200 1.200M1208 867.500v4.300h3.300"/></g>
</svg>
<div class="tab pub" style="left:100px;width:119.500px"><svg class="abs" style="left:16px;top:6.500px" width="12" height="12" viewBox="0 0 12 12"><path d="M11.500 0.500L0.500 5.200l3.400 1.400zM11.500 0.500L4.600 7.300v3.600l2-2.500 2.400 1.500z" fill="#3b9bea"/></svg><span class="abs sx" style="left:33px;top:0;transform:scaleX(.918)">Publication1</span></div>
<div class="tab pub" style="left:222px;width:120.300px"><svg class="abs" style="left:16px;top:6.500px" width="12" height="12" viewBox="0 0 12 12"><path d="M11.500 0.500L0.500 5.200l3.400 1.400zM11.500 0.500L4.600 7.300v3.600l2-2.500 2.400 1.500z" fill="#3b9bea"/></svg><span class="abs sx" style="left:33px;top:0;transform:scaleX(.918)">Publication1</span></div>
<div class="tab dis" style="left:345px;width:111.500px"><svg class="abs" style="left:16px;top:7px" width="11" height="11" viewBox="0 0 11 11"><rect x="0" y="2" width="2.700" height="9" fill="#3bb52a"/><rect x="4" y="4.800" width="2.700" height="6.200" fill="#3bb52a"/><rect x="8" y="0" width="2.700" height="11" fill="#3bb52a"/></svg><span class="abs sx" style="left:32px;top:0;transform:scaleX(.896)">Discovery1</span></div>
<div class="abs" style="left:468px;top:6px;color:#fff;font-weight:bold;font-size:12.8px;letter-spacing:-.3px;line-height:20px;white-space:nowrap">*<svg style="margin:0 5px 0 4px;vertical-align:-1px" width="11" height="11" viewBox="0 0 11 11"><rect x="0" y="2" width="2.700" height="9" fill="#3bb52a"/><rect x="4" y="4.800" width="2.700" height="6.200" fill="#3bb52a"/><rect x="8" y="0" width="2.700" height="11" fill="#3bb52a"/></svg>Discovery5</div>
<svg class="abs" style="left:566px;top:13.500px" width="11" height="7" viewBox="0 0 11 7"><path d="M0 0h10.500l-5.250 6z" fill="#fff"/></svg>
<div class="tab dis" style="left:587.300px;width:110.700px"><svg class="abs" style="left:15.500px;top:7px" width="11" height="11" viewBox="0 0 11 11"><rect x="0" y="2" width="2.700" height="9" fill="#3bb52a"/><rect x="4" y="4.800" width="2.700" height="6.200" fill="#3bb52a"/><rect x="8" y="0" width="2.700" height="11" fill="#3bb52a"/></svg><span class="abs sx" style="left:32px;top:0;transform:scaleX(.896)">Discovery6</span></div>
</div>
<div id="rpanel">
  <div id="qs"><span class="sx" style="transform:scaleX(.885);transform-origin:50% 50%">Quick Styles</span></div><div id="qsline"></div>
  <div id="flatsel"></div>
  <div class="th" style="top:36px;background:#fff"><svg width="84" height="46" viewBox="0 0 84 46"><defs><clipPath id="usc"><path d="M0,5 L21,6.5 33,9 36,13 42,13.5 47,12.5 45,17 44,22 46,26 44,18 49,16 52,21 51,27 57,26 61,24 65,20 69,15 70,11 74,7 75,2.5 78,2.5 81,8 78,13 75,17 73,21 70,24 68,29 71,32 68,37 66,41 67,46 0,46Z"/></clipPath></defs><path d="M0,5 L21,6.5 33,9 36,13 42,13.5 47,12.5 45,17 44,22 46,26 44,18 49,16 52,21 51,27 57,26 61,24 65,20 69,15 70,11 74,7 75,2.5 78,2.5 81,8 78,13 75,17 73,21 70,24 68,29 71,32 68,37 66,41 67,46 0,46Z" fill="#27cfd8"/><g clip-path="url(#usc)" stroke="#fff" stroke-width=".7" stroke-linejoin="round"><polygon points="0,4 5,4 5,19 0,19" fill="#2aa0dc"/><polygon points="5,4 20,6 19,16 5,15" fill="#2f7bd3"/><polygon points="20,6 33,9 36,14 33,24 27,25 26,16 19,16" fill="#2aa0dc"/><polygon points="0,19 5,19 4,33 0,33" fill="#27cfd8"/><polygon points="5,15 19,16 20,25 5,25" fill="#27cfd8"/><polygon points="5,25 20,25 21,33 4,33" fill="#2aa0dc"/><polygon points="20,25 27,25 33,24 35,32 21,33" fill="#27cfd8"/><polygon points="0,33 8,33 8,46 0,46" fill="#2f7bd3"/><polygon points="8,33 21,33 24,46 8,46" fill="#27cfd8"/><polygon points="21,33 35,32 38,46 24,46" fill="#27cfd8"/><polygon points="33,14 36,13 42,13.500 47,12.500 44,22 38,25 33,24" fill="#27cfd8"/><polygon points="38,25 44,22 46,27 47,40 41,44 36,34 35,32" fill="#2aa0dc"/><polygon points="44,18 49,16 52,21 51,27 46,28" fill="#2f7bd3"/><polygon points="46,28 51,27 52,40 47,41" fill="#27cfd8"/><polygon points="51,27 57,26 59,37 52,40" fill="#27cfd8"/><polygon points="57,26 61,24 66,22 69,30 59,36" fill="#27cfd8"/><polygon points="61,24 65,20 69,15 71,11 74,13 73,21 70,24 66,23" fill="#2f7bd3"/><polygon points="74,7 75,2.500 78,2.500 81,8 78,13 75,12" fill="#27cfd8"/><polygon points="70,11 74,7 75,12 74,14" fill="#1fc7a3"/><polygon points="73,14 76,16 73,21" fill="#1fc7a3"/><polygon points="36,34 41,44 40,46 38,46" fill="#27cfd8"/><polygon points="41,44 47,41 52,40 53,46 40,46" fill="#2f7bd3"/><polygon points="52,40 59,37 58,46 53,46" fill="#2aa0dc"/><polygon points="59,36 69,30 68,37 66,41 67,46 58,46" fill="#27cfd8"/></g></svg></div>
<div class="tl" style="top:83px">Blank With Lines</div>
<div class="th" style="top:113px;background:#fff"><svg width="84" height="46" viewBox="0 0 84 46"><path d="M0,5 L21,6.5 33,9 36,13 42,13.5 47,12.5 45,17 44,22 46,26 44,18 49,16 52,21 51,27 57,26 61,24 65,20 69,15 70,11 74,7 75,2.5 78,2.5 81,8 78,13 75,17 73,21 70,24 68,29 71,32 68,37 66,41 67,46 0,46Z" fill="#2aa0dc"/><g clip-path="url(#usc)"><polygon points="0,4 5,4 5,19 0,19" fill="#2f7bd3" stroke="#2f7bd3" stroke-width=".5"/><polygon points="5,4 20,6 19,16 5,15" fill="#2f7bd3" stroke="#2f7bd3" stroke-width=".5"/><polygon points="20,6 33,9 36,14 33,24 27,25 26,16 19,16" fill="#2aa0dc" stroke="#2aa0dc" stroke-width=".5"/><polygon points="0,19 5,19 4,33 0,33" fill="#8fd072" stroke="#8fd072" stroke-width=".5"/><polygon points="5,15 19,16 20,25 5,25" fill="#8fd072" stroke="#8fd072" stroke-width=".5"/><polygon points="5,25 20,25 21,33 4,33" fill="#1ec99c" stroke="#1ec99c" stroke-width=".5"/><polygon points="20,25 27,25 33,24 35,32 21,33" fill="#27cfd8" stroke="#27cfd8" stroke-width=".5"/><polygon points="0,33 8,33 8,46 0,46" fill="#2f7bd3" stroke="#2f7bd3" stroke-width=".5"/><polygon points="8,33 21,33 24,46 8,46" fill="#27cfd8" stroke="#27cfd8" stroke-width=".5"/><polygon points="21,33 35,32 38,46 24,46" fill="#8fd072" stroke="#8fd072" stroke-width=".5"/><polygon points="33,14 36,13 42,13.500 47,12.500 44,22 38,25 33,24" fill="#8fd072" stroke="#8fd072" stroke-width=".5"/><polygon points="38,25 44,22 46,27 47,40 41,44 36,34 35,32" fill="#2aa0dc" stroke="#2aa0dc" stroke-width=".5"/><polygon points="44,18 49,16 52,21 51,27 46,28" fill="#1ec99c" stroke="#1ec99c" stroke-width=".5"/><polygon points="46,28 51,27 52,40 47,41" fill="#27cfd8" stroke="#27cfd8" stroke-width=".5"/><polygon points="51,27 57,26 59,37 52,40" fill="#8fd072" stroke="#8fd072" stroke-width=".5"/><polygon points="57,26 61,24 66,22 69,30 59,36" fill="#27cfd8" stroke="#27cfd8" stroke-width=".5"/><polygon points="61,24 65,20 69,15 71,11 74,13 73,21 70,24 66,23" fill="#2f7bd3" stroke="#2f7bd3" stroke-width=".5"/><polygon points="74,7 75,2.500 78,2.500 81,8 78,13 75,12" fill="#8fd072" stroke="#8fd072" stroke-width=".5"/><polygon points="70,11 74,7 75,12 74,14" fill="#1ec99c" stroke="#1ec99c" stroke-width=".5"/><polygon points="73,14 76,16 73,21" fill="#27cfd8" stroke="#27cfd8" stroke-width=".5"/><polygon points="36,34 41,44 40,46 38,46" fill="#27cfd8" stroke="#27cfd8" stroke-width=".5"/><polygon points="41,44 47,41 52,40 53,46 40,46" fill="#1ec99c" stroke="#1ec99c" stroke-width=".5"/><polygon points="52,40 59,37 58,46 53,46" fill="#2aa0dc" stroke="#2aa0dc" stroke-width=".5"/><polygon points="59,36 69,30 68,37 66,41 67,46 58,46" fill="#8fd072" stroke="#8fd072" stroke-width=".5"/></g></svg></div>
<div class="tl" style="top:160px">Blank</div>
<div class="th" style="top:190px;background:#fff"><svg width="84" height="46" viewBox="0 0 84 46"><g fill="#e9e0db" stroke="#1a1a1a" stroke-width=".8" stroke-linejoin="round"><path d="M12,10 L17,6.500 21,8 20,14 17,20 13,22 12,17 14,14Z"/><path d="M22,0 L30,0 32,6 34,12 37,18 39,24 36,28 30,29 24,31 26,26 29,24 25,21 27,15 24,12 25,6Z"/><path d="M54,0 L62,0 63,4 60,9 57,6Z"/><path d="M66,0 L84,0 84,6 78,5 72,8 68,6Z"/><path d="M25,38 L31,36 33,32 38,33 40,29 44,27 47,23 50,18 53,14 57,13 60,11 66,12 72,10 78,9 84,8 84,46 28,46 30,42Z"/></g><g fill="none" stroke="#1a1a1a" stroke-width=".7" stroke-dasharray="1.6 1"><path d="M40,29 L45,31 50,35 53,39 51,46M47,23 L50,27 48,31M50,35 L56,33 57,28M66,12 L68,20 66,27 60,31 62,36 70,38 76,36 84,37M62,36 L60,42 62,46M70,38 L72,46M66,27 L74,29 80,33"/></g></svg></div>
<div class="tl" style="top:237px">Flat</div>
<div class="th" style="top:267px;background:#e5f2fa"><svg width="84" height="46" viewBox="0 0 84 46"><g fill="none" stroke="#2e6b80" stroke-width=".55"><path d="M3.0,16.0 Q14.0,9.0 24.0,7.5 Q34.0,6.0 45.0,5.0 Q56.0,4.0 63.0,5.0 Q70.0,6.0 70.5,12.0 Q71.0,18.0 75.0,22.0 Q79.0,26.0 79.5,31.0 Q80.0,36.0 76.0,39.0 Q72.0,42.0 65.0,41.5 Q58.0,41.0 51.0,39.0 Q44.0,37.0 36.0,34.5 Q28.0,32.0 20.0,29.0 Q12.0,26.0 8.0,23.5 Q4.0,21.0 3.5,18.5 Q3.0,16.0 8.5,12.5Z"/><path d="M6.9,17.1 Q16.9,10.7 26.0,9.4 Q35.1,8.0 44.9,7.2 Q54.8,6.4 61.2,7.4 Q67.5,8.4 68.0,13.7 Q68.5,19.1 72.0,22.6 Q75.5,26.2 75.8,30.6 Q76.1,35.0 72.3,37.6 Q68.6,40.2 62.2,39.8 Q55.9,39.3 49.6,37.5 Q43.2,35.8 36.1,33.5 Q28.9,31.3 21.9,28.7 Q14.8,26.0 11.3,23.8 Q7.8,21.5 7.4,19.3 Q6.9,17.1 11.9,13.9Z"/><path d="M10.9,18.1 Q19.8,12.4 27.9,11.2 Q36.1,10.1 44.9,9.4 Q53.6,8.7 59.3,9.7 Q65.0,10.7 65.5,15.4 Q66.0,20.1 69.0,23.2 Q71.9,26.4 72.0,30.2 Q72.1,34.0 68.6,36.2 Q65.2,38.5 59.5,38.0 Q53.8,37.6 48.1,36.0 Q42.4,34.5 36.1,32.6 Q29.8,30.7 23.7,28.3 Q17.7,26.0 14.6,24.0 Q11.6,22.1 11.3,20.1 Q10.9,18.1 15.3,15.3Z"/><path d="M14.8,19.2 Q22.7,14.1 29.9,13.1 Q37.2,12.1 44.8,11.6 Q52.5,11.1 57.5,12.1 Q62.5,13.1 63.0,17.1 Q63.5,21.2 65.9,23.9 Q68.4,26.6 68.3,29.8 Q68.2,33.0 65.0,34.9 Q61.7,36.7 56.7,36.3 Q51.7,35.9 46.7,34.6 Q41.6,33.3 36.2,31.6 Q30.8,30.0 25.6,28.0 Q20.5,26.0 18.0,24.3 Q15.4,22.6 15.1,20.9 Q14.8,19.2 18.8,16.6Z"/><path d="M18.8,20.2 Q25.6,15.8 31.9,15.0 Q38.2,14.1 44.7,13.8 Q51.3,13.5 55.6,14.5 Q60.0,15.5 60.5,18.8 Q61.0,22.2 62.9,24.5 Q64.8,26.8 64.5,29.4 Q64.2,32.1 61.3,33.5 Q58.3,34.9 54.0,34.5 Q49.6,34.2 45.2,33.1 Q40.8,32.0 36.3,30.7 Q31.7,29.4 27.5,27.7 Q23.3,26.0 21.3,24.6 Q19.2,23.1 19.0,21.7 Q18.8,20.2 22.2,18.0Z"/><path d="M22.7,21.3 Q28.5,17.5 33.9,16.9 Q39.3,16.2 44.7,16.0 Q50.1,15.8 53.8,16.8 Q57.5,17.8 58.0,20.5 Q58.5,23.3 59.9,25.1 Q61.3,27.0 60.8,29.0 Q60.3,31.1 57.6,32.1 Q54.9,33.1 51.2,32.8 Q47.5,32.5 43.8,31.6 Q40.1,30.8 36.3,29.7 Q32.6,28.7 29.4,27.4 Q26.1,26.0 24.6,24.8 Q23.1,23.6 22.9,22.4 Q22.7,21.3 25.6,19.4Z"/><path d="M26.7,22.3 Q31.3,19.3 35.8,18.7 Q40.3,18.2 44.6,18.2 Q48.9,18.2 52.0,19.2 Q55.0,20.2 55.5,22.3 Q56.0,24.3 56.9,25.7 Q57.7,27.2 57.0,28.6 Q56.3,30.1 53.9,30.7 Q51.5,31.4 48.4,31.1 Q45.4,30.7 42.3,30.1 Q39.3,29.5 36.4,28.8 Q33.5,28.1 31.2,27.0 Q29.0,26.0 27.9,25.1 Q26.9,24.2 26.8,23.2 Q26.7,22.3 29.0,20.8Z"/><path d="M30.6,23.4 Q34.2,21.0 37.8,20.6 Q41.4,20.3 44.5,20.4 Q47.7,20.6 50.1,21.6 Q52.5,22.6 53.0,24.0 Q53.5,25.4 53.8,26.4 Q54.2,27.4 53.3,28.2 Q52.4,29.1 50.2,29.3 Q48.1,29.6 45.7,29.3 Q43.3,29.0 40.9,28.6 Q38.5,28.3 36.5,27.8 Q34.4,27.4 33.1,26.7 Q31.8,26.0 31.2,25.3 Q30.7,24.7 30.6,24.0 Q30.6,23.4 32.4,22.2Z"/><path d="M36,24.500 Q40,22.500 45,23 T50,26.500 Q46,28.500 41,27.500 T36,24.500Z" stroke-width=".8"/></g></svg></div>
<div class="tl" style="top:314px">Topology</div>
<div class="th" style="top:344px;background:#fff"><svg width="84" height="46" viewBox="0 0 84 46"><rect width="84" height="46" fill="#ebe8e0"/><path d="M0,30 L8,22 14,21 18,22 22,27 33,46 0,46Z" fill="#a5d9a3"/><path d="M84,10 L76,12 71,18 70,26 73,34 80,42 84,44Z" fill="#a5d9a3"/><g stroke="#d8d2c6" stroke-width=".7"><path d="M20.0,4 l5,9"/><path d="M20.5,24 l6,10"/><path d="M29.0,4 l5,9"/><path d="M29.5,24 l6,10"/><path d="M38.0,4 l5,9"/><path d="M38.5,24 l6,10"/><path d="M47.0,4 l5,9"/><path d="M47.5,24 l6,10"/><path d="M56.0,4 l5,9"/><path d="M56.5,24 l6,10"/><path d="M65.0,4 l5,9"/><path d="M65.5,24 l6,10"/><path d="M74.0,4 l5,9"/><path d="M74.5,24 l6,10"/></g><g fill="none" stroke="#fff" stroke-width="1.300"><path d="M70,18 L80,19 84,26M6,24 L14,23 18,20"/></g><g fill="none" stroke="#e9b82e" stroke-width="2.300"><path d="M5,0 L40,46M12,0 L17,9M26,0 L0,30M46,0 L54,11 82,46M33,30 L54,11 78,0"/></g><g fill="none" stroke="#f6d24a" stroke-width="1.300"><path d="M5,0 L40,46M12,0 L17,9M26,0 L0,30M46,0 L54,11 82,46M33,30 L54,11 78,0"/></g></svg></div>
<div class="tl" style="top:391px">Street</div>
<div class="th" style="top:421px;background:#fff"><svg width="84" height="46" viewBox="0 0 84 46"><rect width="84" height="46" fill="#eeeee8"/><path d="M0,0 H84 V14 L60,20 30,16 0,22Z" fill="#cfe5a8"/><path d="M0,6 L3,5 3,12 0,13Z" fill="#8fb4e0"/><path d="M24,14 Q40,8 56,10 T64,0 H58 Q58,6 50,7 T22,11Z" fill="#fff"/><path d="M40,46 L66,20 72,22 50,46Z" fill="#fff"/><path d="M0,32 L84,24 84,27 0,36Z" fill="#fbfbf8" opacity=".7"/><path d="M14,3 h9 v20 h-9Z" fill="#d9d8cf"/><path d="M14,3 h9 l3,-2.0999999999999996 h-9Z" fill="#f3f2ec"/><path d="M23,3 l3,-2.0999999999999996 v20 l-3,2.0999999999999996Z" fill="#c3c2b8"/><path d="M37,8 h9 v17 h-9Z" fill="#d9d8cf"/><path d="M37,8 h9 l3,-2.0999999999999996 h-9Z" fill="#f3f2ec"/><path d="M46,8 l3,-2.0999999999999996 v17 l-3,2.0999999999999996Z" fill="#c3c2b8"/><path d="M1,15 h17 v18 h-17Z" fill="#d9d8cf"/><path d="M1,15 h17 l3,-2.0999999999999996 h-17Z" fill="#f3f2ec"/><path d="M18,15 l3,-2.0999999999999996 v18 l-3,2.0999999999999996Z" fill="#c3c2b8"/><path d="M23,26 h9 v7 h-9Z" fill="#d9d8cf"/><path d="M23,26 h9 l3,-2.0999999999999996 h-9Z" fill="#f3f2ec"/><path d="M32,26 l3,-2.0999999999999996 v7 l-3,2.0999999999999996Z" fill="#c3c2b8"/><path d="M39,25 h7 v8 h-7Z" fill="#d9d8cf"/><path d="M39,25 h7 l3,-2.0999999999999996 h-7Z" fill="#f3f2ec"/><path d="M46,25 l3,-2.0999999999999996 v8 l-3,2.0999999999999996Z" fill="#c3c2b8"/><path d="M8,33 h18 v9 h-18Z" fill="#d9d8cf"/><path d="M8,33 h18 l3,-2.0999999999999996 h-18Z" fill="#f3f2ec"/><path d="M26,33 l3,-2.0999999999999996 v9 l-3,2.0999999999999996Z" fill="#c3c2b8"/><path d="M33,34 h12 v9 h-12Z" fill="#d9d8cf"/><path d="M33,34 h12 l3,-2.0999999999999996 h-12Z" fill="#f3f2ec"/><path d="M45,34 l3,-2.0999999999999996 v9 l-3,2.0999999999999996Z" fill="#c3c2b8"/><path d="M56,35 h16 v8 h-16Z" fill="#d9d8cf"/><path d="M56,35 h16 l3,-2.0999999999999996 h-16Z" fill="#f3f2ec"/><path d="M72,35 l3,-2.0999999999999996 v8 l-3,2.0999999999999996Z" fill="#c3c2b8"/><path d="M64,27 h12 v6 h-12Z" fill="#d9d8cf"/><path d="M64,27 h12 l3,-2.0999999999999996 h-12Z" fill="#f3f2ec"/><path d="M76,27 l3,-2.0999999999999996 v6 l-3,2.0999999999999996Z" fill="#c3c2b8"/><path d="M75,19 h7 v7 h-7Z" fill="#d9d8cf"/><path d="M75,19 h7 l3,-2.0999999999999996 h-7Z" fill="#f3f2ec"/><path d="M82,19 l3,-2.0999999999999996 v7 l-3,2.0999999999999996Z" fill="#c3c2b8"/><path d="M6,42 h14 v4 h-14Z" fill="#d9d8cf"/><path d="M6,42 h14 l3,-2.0999999999999996 h-14Z" fill="#f3f2ec"/><path d="M20,42 l3,-2.0999999999999996 v4 l-3,2.0999999999999996Z" fill="#c3c2b8"/><path d="M28,43 h10 v3 h-10Z" fill="#d9d8cf"/><path d="M28,43 h10 l3,-2.0999999999999996 h-10Z" fill="#f3f2ec"/><path d="M38,43 l3,-2.0999999999999996 v3 l-3,2.0999999999999996Z" fill="#c3c2b8"/></svg></div>
<div class="tl" style="top:468px">3D Street</div>
<div class="th" style="top:498px;background:#fff"><svg width="84" height="46" viewBox="0 0 84 46"><rect width="84" height="46" fill="#2f6b2c"/><circle cx="27.2" cy="4.5" r="3.1" fill="#2a6227"/><circle cx="69.0" cy="2.8" r="3.0" fill="#477f3c"/><circle cx="18.0" cy="2.6" r="2.5" fill="#37762f"/><circle cx="7.6" cy="12.7" r="3.6" fill="#2a6227"/><circle cx="79.6" cy="18.9" r="3.0" fill="#2a6227"/><circle cx="48.5" cy="11.9" r="3.9" fill="#2a6227"/><circle cx="46.8" cy="4.0" r="2.5" fill="#477f3c"/><circle cx="9.9" cy="9.3" r="3.5" fill="#37762f"/><circle cx="8.7" cy="17.1" r="2.0" fill="#2a6227"/><circle cx="46.0" cy="1.9" r="1.6" fill="#37762f"/><circle cx="41.7" cy="16.0" r="3.4" fill="#2b5f2a"/><circle cx="49.2" cy="13.6" r="2.2" fill="#37762f"/><circle cx="58.7" cy="7.3" r="2.9" fill="#477f3c"/><circle cx="41.6" cy="10.3" r="2.6" fill="#477f3c"/><circle cx="82.3" cy="3.5" r="2.5" fill="#3f7f36"/><circle cx="12.8" cy="14.7" r="1.6" fill="#2a6227"/><circle cx="64.2" cy="17.2" r="3.7" fill="#3f7f36"/><circle cx="28.6" cy="10.5" r="2.7" fill="#2b5f2a"/><circle cx="5.8" cy="2.8" r="2.2" fill="#2a6227"/><circle cx="5.1" cy="21.0" r="3.1" fill="#2b5f2a"/><circle cx="23.9" cy="11.6" r="3.2" fill="#2a6227"/><circle cx="79.0" cy="10.7" r="3.0" fill="#2b5f2a"/><circle cx="5.0" cy="23.0" r="1.8" fill="#37762f"/><circle cx="33.4" cy="27.5" r="2.7" fill="#37762f"/><circle cx="37.7" cy="16.5" r="3.7" fill="#2b5f2a"/><circle cx="72.6" cy="8.4" r="2.5" fill="#3f7f36"/><circle cx="57.3" cy="11.4" r="2.1" fill="#2a6227"/><circle cx="14.8" cy="7.0" r="2.1" fill="#2b5f2a"/><circle cx="69.8" cy="5.5" r="2.2" fill="#37762f"/><circle cx="35.2" cy="11.1" r="2.9" fill="#37762f"/><circle cx="58.0" cy="15.5" r="3.0" fill="#2a6227"/><circle cx="38.4" cy="26.1" r="3.9" fill="#477f3c"/><circle cx="33.0" cy="12.0" r="1.8" fill="#2b5f2a"/><circle cx="5.2" cy="2.0" r="2.0" fill="#37762f"/><circle cx="9.2" cy="18.0" r="1.8" fill="#477f3c"/><circle cx="12.7" cy="3.0" r="2.4" fill="#2a6227"/><circle cx="5.9" cy="6.2" r="2.4" fill="#3f7f36"/><circle cx="80.3" cy="18.1" r="2.7" fill="#2a6227"/><circle cx="71.3" cy="29.8" r="2.7" fill="#2b5f2a"/><circle cx="26.2" cy="4.3" r="3.4" fill="#3f7f36"/><circle cx="40.2" cy="20.8" r="2.8" fill="#37762f"/><circle cx="79.9" cy="15.8" r="1.9" fill="#477f3c"/><circle cx="76.8" cy="22.7" r="2.2" fill="#2a6227"/><circle cx="58.5" cy="7.8" r="2.4" fill="#37762f"/><circle cx="29.9" cy="6.7" r="2.9" fill="#477f3c"/><circle cx="27.7" cy="6.7" r="3.5" fill="#37762f"/><circle cx="67.7" cy="24.5" r="3.3" fill="#37762f"/><circle cx="16.8" cy="14.8" r="3.3" fill="#2a6227"/><circle cx="66.4" cy="14.2" r="2.0" fill="#477f3c"/><circle cx="80.3" cy="13.4" r="3.8" fill="#3f7f36"/><circle cx="80.2" cy="10.9" r="2.1" fill="#37762f"/><circle cx="39.5" cy="10.1" r="2.7" fill="#477f3c"/><circle cx="70.6" cy="14.4" r="3.1" fill="#2a6227"/><circle cx="70.1" cy="3.6" r="2.5" fill="#37762f"/><circle cx="40.2" cy="5.4" r="3.5" fill="#3f7f36"/><circle cx="7.3" cy="28.4" r="3.3" fill="#2b5f2a"/><circle cx="33.7" cy="28.4" r="3.3" fill="#37762f"/><circle cx="83.4" cy="0.8" r="3.0" fill="#2b5f2a"/><circle cx="67.7" cy="4.4" r="3.6" fill="#2b5f2a"/><circle cx="55.2" cy="10.5" r="2.9" fill="#37762f"/><path d="M0,46 L0,42 14,40 30,38 48,37 58,35 66,30 72,24 80,24 84,30 84,46Z" fill="#141f4a"/><path d="M0,41 L14,38.500 30,36.500 48,35.500 57,33 64,28 70,22 76,16 84,10" fill="none" stroke="#9aa88c" stroke-width="1.600" opacity=".85"/><path d="M0,10 L8,12 12,20 18,28M26,0 L34,8 46,6 56,10 54,20 46,28M40,24 L30,26" fill="none" stroke="#7f9a6e" stroke-width=".9" opacity=".8"/><path d="M26,28 l6,-2 4,3 -5,4Z" fill="#c6b58a"/><path d="M20,39 l10,-2M36,36 l10,-1" stroke="#e8e8e0" stroke-width="1.100"/></svg></div>
<div class="tl" style="top:545px">Satellite</div>
<div class="th" style="top:575px;background:#fff"><svg width="84" height="46" viewBox="0 0 84 46"><rect width="84" height="46" fill="#2d3236"/><circle cx="1.8" cy="36.8" r="2.9" fill="#1f2428"/><circle cx="44.2" cy="42.9" r="2.2" fill="#555a5c"/><circle cx="16.4" cy="40.2" r="1.3" fill="#3a4045"/><circle cx="24.6" cy="11.1" r="2.5" fill="#2a3a30"/><circle cx="45.7" cy="38.4" r="1.3" fill="#3b4436"/><circle cx="29.7" cy="21.1" r="2.5" fill="#1a1e24"/><circle cx="35.3" cy="42.2" r="2.4" fill="#1a1e24"/><circle cx="12.8" cy="23.5" r="3.2" fill="#555a5c"/><circle cx="15.4" cy="0.2" r="3.0" fill="#3a4045"/><circle cx="11.9" cy="28.5" r="1.5" fill="#1f2428"/><circle cx="27.4" cy="23.8" r="2.5" fill="#555a5c"/><circle cx="65.2" cy="40.6" r="1.3" fill="#3a4045"/><circle cx="23.3" cy="35.5" r="2.4" fill="#1a1e24"/><circle cx="2.3" cy="41.1" r="1.3" fill="#2a3a30"/><circle cx="51.5" cy="23.3" r="2.4" fill="#3b4436"/><circle cx="23.3" cy="23.4" r="3.1" fill="#1a1e24"/><circle cx="79.1" cy="32.2" r="3.2" fill="#2a3a30"/><circle cx="77.5" cy="41.1" r="1.7" fill="#454b50"/><circle cx="11.5" cy="5.6" r="2.2" fill="#1f2428"/><circle cx="56.4" cy="19.7" r="1.7" fill="#2a3a30"/><circle cx="65.9" cy="41.3" r="1.6" fill="#3b4436"/><circle cx="54.1" cy="16.8" r="1.8" fill="#3a4045"/><circle cx="81.3" cy="10.1" r="3.4" fill="#454b50"/><circle cx="74.3" cy="7.5" r="2.7" fill="#3a4045"/><circle cx="13.6" cy="19.9" r="2.4" fill="#2a3a30"/><circle cx="35.4" cy="16.4" r="1.4" fill="#2a3a30"/><circle cx="1.6" cy="25.5" r="2.2" fill="#1f2428"/><circle cx="32.3" cy="23.8" r="1.9" fill="#1f2428"/><circle cx="9.5" cy="42.3" r="1.7" fill="#1f2428"/><circle cx="7.1" cy="12.5" r="3.3" fill="#3a4045"/><circle cx="22.7" cy="6.0" r="2.2" fill="#3b4436"/><circle cx="68.8" cy="11.9" r="1.5" fill="#1a1e24"/><circle cx="47.9" cy="32.2" r="1.4" fill="#1f2428"/><circle cx="67.2" cy="8.4" r="3.3" fill="#2a3a30"/><circle cx="78.8" cy="29.2" r="3.0" fill="#1f2428"/><circle cx="51.1" cy="10.2" r="1.8" fill="#1f2428"/><circle cx="38.1" cy="15.6" r="2.5" fill="#2a3a30"/><circle cx="52.2" cy="2.0" r="2.8" fill="#1f2428"/><circle cx="81.4" cy="12.0" r="1.6" fill="#2a3a30"/><circle cx="52.8" cy="24.4" r="1.7" fill="#454b50"/><circle cx="42.0" cy="8.2" r="2.0" fill="#1f2428"/><circle cx="83.5" cy="1.7" r="1.2" fill="#1a1e24"/><circle cx="46.3" cy="8.7" r="2.3" fill="#454b50"/><circle cx="8.9" cy="37.7" r="2.2" fill="#454b50"/><circle cx="45.9" cy="40.9" r="3.4" fill="#2a3a30"/><circle cx="57.8" cy="45.2" r="2.0" fill="#555a5c"/><circle cx="74.1" cy="33.5" r="1.5" fill="#2a3a30"/><circle cx="82.5" cy="38.5" r="1.2" fill="#3b4436"/><circle cx="62.2" cy="11.8" r="1.6" fill="#1f2428"/><circle cx="55.9" cy="17.5" r="2.4" fill="#2a3a30"/><circle cx="50.3" cy="31.9" r="1.3" fill="#3a4045"/><circle cx="13.2" cy="20.5" r="1.8" fill="#2a3a30"/><circle cx="81.7" cy="25.2" r="1.8" fill="#2a3a30"/><circle cx="18.3" cy="8.4" r="2.0" fill="#1f2428"/><circle cx="39.9" cy="23.1" r="1.7" fill="#1a1e24"/><circle cx="65.2" cy="4.2" r="3.1" fill="#3a4045"/><circle cx="33.6" cy="1.9" r="1.3" fill="#2a3a30"/><circle cx="52.9" cy="3.9" r="3.4" fill="#555a5c"/><circle cx="63.0" cy="30.2" r="2.8" fill="#1a1e24"/><circle cx="32.7" cy="15.0" r="3.5" fill="#3a4045"/><circle cx="23.9" cy="28.5" r="1.5" fill="#555a5c"/><circle cx="70.2" cy="41.0" r="2.6" fill="#3b4436"/><circle cx="58.9" cy="23.3" r="3.3" fill="#555a5c"/><circle cx="42.4" cy="38.4" r="3.1" fill="#555a5c"/><circle cx="57.7" cy="36.7" r="2.8" fill="#3b4436"/><circle cx="54.0" cy="3.9" r="1.3" fill="#3b4436"/><circle cx="30.3" cy="4.8" r="3.1" fill="#1a1e24"/><circle cx="4.3" cy="0.9" r="2.4" fill="#3a4045"/><circle cx="41.1" cy="0.2" r="3.0" fill="#3b4436"/><circle cx="78.3" cy="41.3" r="1.4" fill="#1a1e24"/><circle cx="5.5" cy="33.9" r="1.8" fill="#1f2428"/><circle cx="71.1" cy="10.8" r="2.9" fill="#3a4045"/><circle cx="62.1" cy="44.9" r="2.3" fill="#454b50"/><circle cx="6.4" cy="41.9" r="1.9" fill="#1f2428"/><circle cx="51.8" cy="29.6" r="1.4" fill="#3a4045"/><circle cx="27.9" cy="30.0" r="2.8" fill="#1a1e24"/><circle cx="47.7" cy="0.6" r="1.3" fill="#2a3a30"/><circle cx="81.7" cy="4.6" r="1.7" fill="#454b50"/><circle cx="24.4" cy="23.8" r="2.3" fill="#454b50"/><circle cx="64.4" cy="45.7" r="2.5" fill="#2a3a30"/><circle cx="82.2" cy="43.1" r="1.2" fill="#454b50"/><circle cx="6.4" cy="23.3" r="3.5" fill="#2a3a30"/><circle cx="32.5" cy="42.2" r="3.3" fill="#1f2428"/><circle cx="48.8" cy="6.5" r="2.4" fill="#2a3a30"/><circle cx="11.1" cy="37.7" r="2.4" fill="#1f2428"/><circle cx="59.1" cy="10.6" r="3.3" fill="#454b50"/><circle cx="33.1" cy="7.3" r="3.4" fill="#3b4436"/><circle cx="37.9" cy="13.9" r="1.5" fill="#2a3a30"/><circle cx="31.6" cy="5.6" r="2.0" fill="#2a3a30"/><circle cx="63.1" cy="38.6" r="1.5" fill="#3a4045"/><g fill="none" stroke="#8e9496" stroke-width="1.700" opacity=".9"><path d="M0,24.500 H84M40,7 H72M68,0 V24M0,41 H84M28,24 L18,46M40,7 L28,24M48,25 V41"/></g><g fill="none" stroke="#6c7274" stroke-width="1" opacity=".8"><path d="M6,5 H34M10,12 L26,18M56,25 V46M74,25 V41M0,32 H20"/></g><rect x="40" y="27" width="6" height="4" fill="#c9cdd0"/><rect x="54" y="30" width="8" height="6" fill="#9da3a6"/><rect x="64" y="33" width="5" height="6" fill="#b5b9bb"/></svg></div>
<div class="tl" style="top:622px">Satellite &amp; Street</div>
</div>
<svg class="abs" style="left:0;top:698px" width="192" height="54" viewBox="0 698 192 54">
<defs><g id="gchoro"><circle r="11" fill="#8a8a8a"/>
<path d="M4.600-10A11 11 0 0 1 10.600-3.200H6.800C6.400-6 5.700-8.300 4.600-10z" fill="#e5603e"/>
<path d="M10.600 3.600A11 11 0 0 1 4.200 10.200C5.500 8.500 6.400 6.200 6.800 3.600z" fill="#5b9fd0"/>
<rect x="-11" y="-3.400" width="5.200" height="6.800" fill="#f0cf8a"/><rect x="-5" y="-3.400" width="10.200" height="6.800" fill="#86a843"/>
<g fill="none" stroke="#2e2e2e" stroke-width="1.200"><ellipse rx="5.600" ry="11"/><path d="M0-11v7.500M0 3.500v7.500M-10.500-3.900h21M-10.500 3.900h21M-5.400-3.400v6.800"/></g></g></defs>
<rect x="47.500" y="704" width="138" height="45" rx="5" fill="#000" opacity=".18"/>
<rect x="3.500" y="701.700" width="45" height="45" rx="5" fill="#2e2e2e" stroke="#606060"/>
<g fill="#2e2e2e" stroke="#585858"><rect x="47.300" y="701.700" width="46" height="45" rx="5"/><rect x="93.300" y="701.700" width="46" height="45" rx="5"/><rect x="139.300" y="701.700" width="46" height="45" rx="5"/></g>
<use href="#gchoro" x="26.900" y="724"/>
<g transform="translate(70 724)"><circle r="11" fill="#8a8a8a"/><g fill="none" stroke="#2e2e2e" stroke-width="1.300"><ellipse rx="5" ry="11"/><path d="M0-11v22M-10.500-4.200h21M-10.500 4.200h21"/></g><circle cx="3.800" cy="0.200" r="3.500" fill="#5b9fd0"/><circle cx="-0.600" cy="4.900" r="3" fill="#5b9fd0"/><circle cx="4.800" cy="5.800" r="2.100" fill="#5b9fd0"/></g>
<use href="#gchoro" x="116" y="724"/>
<circle cx="162.200" cy="724" r="12.200" fill="#5b9fd0"/><circle cx="163.700" cy="725.200" r="9" fill="#6cc04a"/><circle cx="165.200" cy="726.600" r="6" fill="#f4dc3a"/><circle cx="166.400" cy="727.800" r="2.900" fill="#e05c50"/>
</svg>

</div>
<div id="pink"></div>

</body></html>
